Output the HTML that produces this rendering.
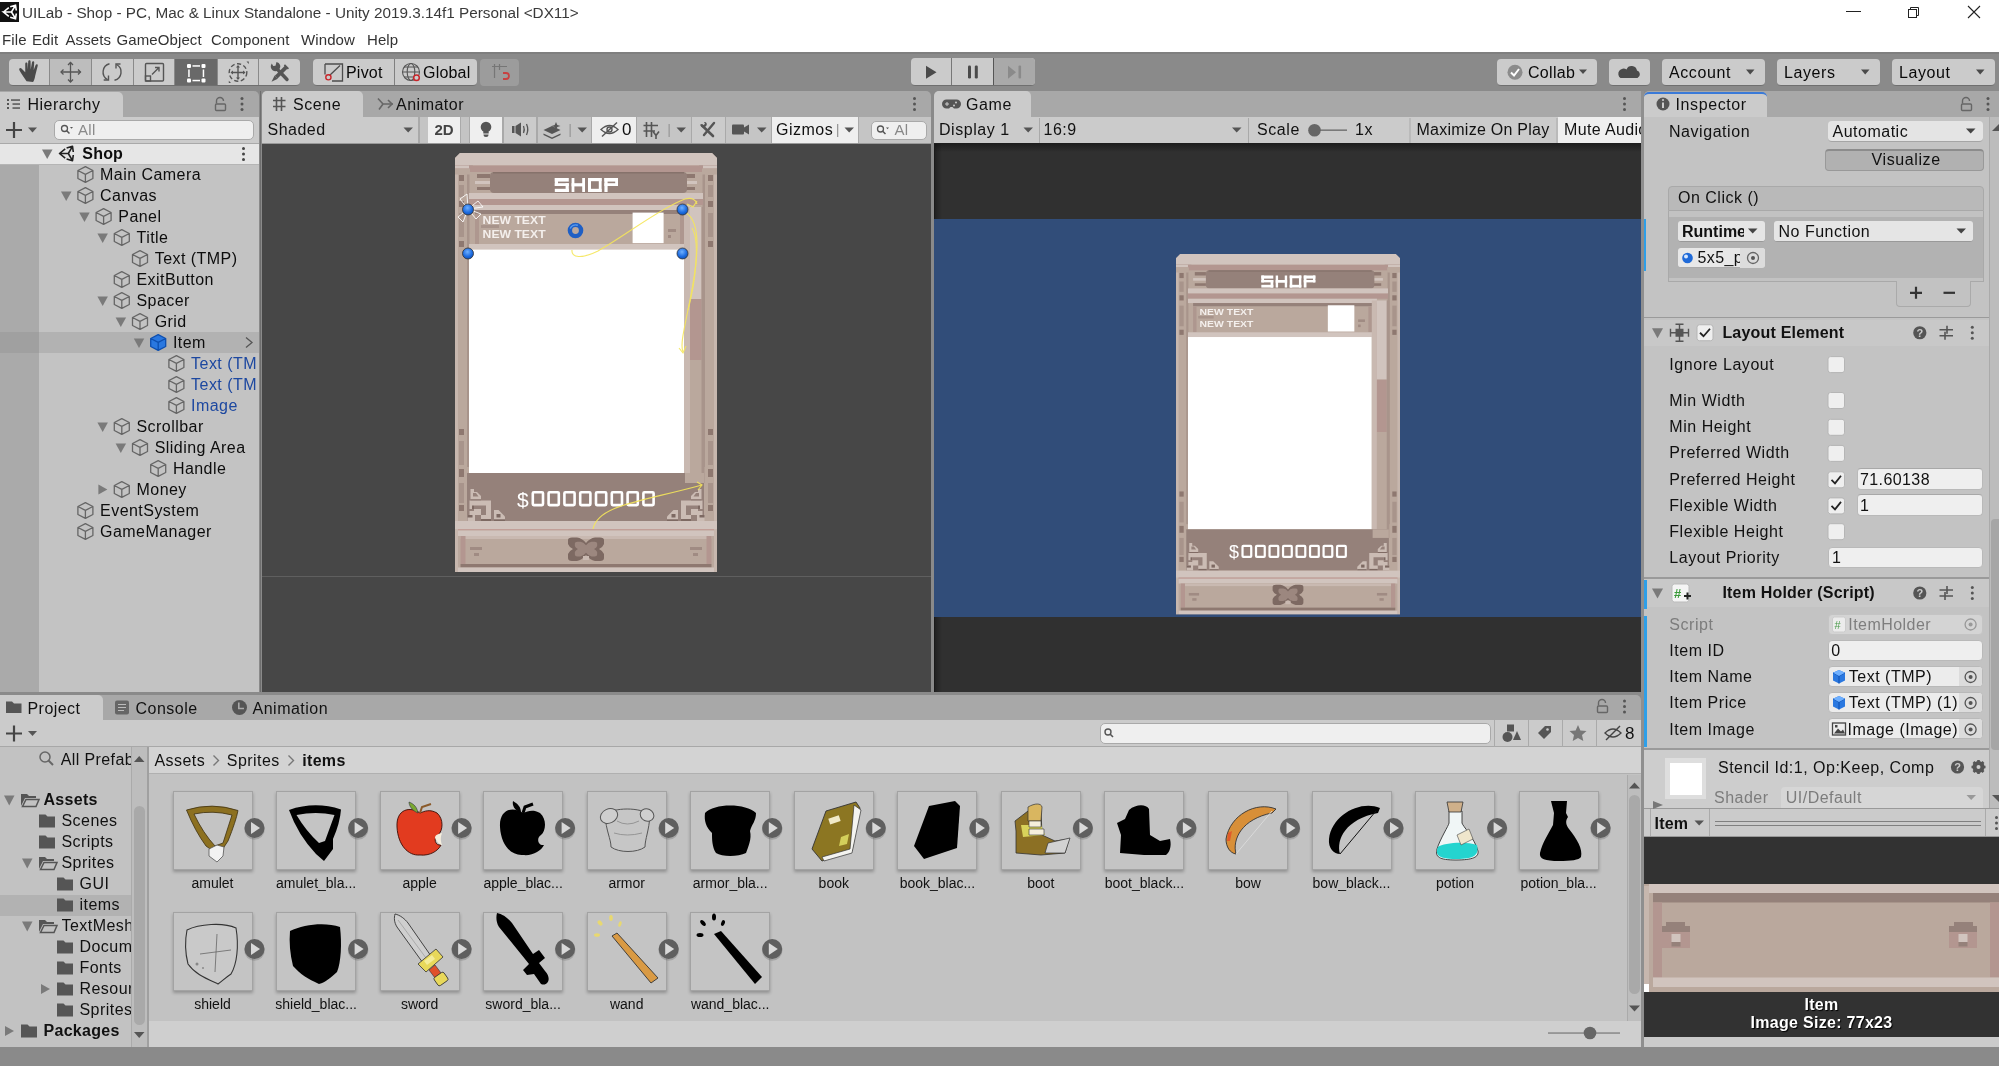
<!DOCTYPE html>
<html><head><meta charset="utf-8">
<style>
*{box-sizing:border-box;margin:0;padding:0}
html,body{width:1999px;height:1066px;overflow:hidden;background:#8a8a8a;font-family:"Liberation Sans",sans-serif;font-size:16px;color:#090909}
.a{position:absolute}
.t{position:absolute;white-space:nowrap;line-height:20px;letter-spacing:0.3px}
.b{font-weight:bold}
svg{position:absolute;overflow:visible}
.btn{position:absolute;background:#cbcbcb;border-bottom:1px solid #777;}
</style></head><body>
<div style="position:absolute;left:0;top:0;width:1999px;height:1066px;overflow:hidden;will-change:transform"><!-- title bar -->
<div class="a" style="left:0;top:0;width:1999px;height:52px;background:#fff"></div>
<!-- main toolbar -->
<div class="a" style="left:0;top:52px;width:1999px;height:39px;background:#8a8a8a;border-top:2px solid #7f7f7f"></div>
<!-- hierarchy -->
<div class="a" style="left:0;top:117px;width:259px;height:575px;background:#c3c3c3"></div>
<div class="a" style="left:0;top:91px;width:259px;height:26px;background:#a8a8a8;border-radius:0 5px 0 0"></div>
<div class="a" style="left:0;top:92px;width:123px;height:25px;background:#cbcbcb;border-radius:0 5px 0 0"></div>
<div class="a" style="left:0;top:117px;width:259px;height:27px;background:#cbcbcb;border-bottom:1px solid #a0a0a0"></div>
<div class="a" style="left:0;top:144px;width:39px;height:548px;background:#aaaaaa"></div>
<div class="a" style="left:260px;top:91px;width:1px;height:601px;background:#6e6e6e"></div>
<!-- scene -->
<div class="a" style="left:262px;top:117px;width:669px;height:575px;background:#474747"></div>
<div class="a" style="left:262px;top:91px;width:669px;height:26px;background:#a8a8a8;border-radius:5px 5px 0 0"></div>
<div class="a" style="left:262px;top:91px;width:101px;height:26px;background:#cbcbcb;border-radius:5px 5px 0 0"></div>
<div class="a" style="left:262px;top:117px;width:669px;height:27px;background:#cbcbcb;border-bottom:1px solid #999"></div>
<!-- game -->
<div class="a" style="left:934px;top:117px;width:707px;height:575px;background:#303030"></div>
<div class="a" style="left:934px;top:91px;width:707px;height:26px;background:#a8a8a8;border-radius:5px 0 0 0"></div>
<div class="a" style="left:934px;top:91px;width:97px;height:26px;background:#cbcbcb;border-radius:5px 5px 0 0"></div>
<div class="a" style="left:934px;top:117px;width:707px;height:27px;background:#cbcbcb;border-bottom:1px solid #1e1e1e"></div>
<div class="a" style="left:934px;top:219px;width:707px;height:398px;background:#314d79"></div>
<!-- inspector -->
<div class="a" style="left:1644px;top:117px;width:355px;height:930px;background:#c3c3c3"></div>
<div class="a" style="left:1644px;top:91px;width:355px;height:26px;background:#a8a8a8;border-radius:5px 0 0 0"></div>
<div class="a" style="left:1644px;top:92px;width:123px;height:25px;background:#cbcbcb;border-radius:5px 5px 0 0;border-top:2px solid #3a7ad8"></div>
<!-- project -->
<div class="a" style="left:0;top:720px;width:1641px;height:327px;background:#c2c2c2"></div>
<div class="a" style="left:0;top:695px;width:1641px;height:25px;background:#a8a8a8;border-radius:0 5px 0 0"></div>
<div class="a" style="left:0;top:695px;width:103px;height:25px;background:#cbcbcb;border-radius:0 5px 0 0"></div>
<div class="a" style="left:0;top:720px;width:1641px;height:27px;background:#cbcbcb;border-bottom:1px solid #a8a8a8"></div>
<div class="a" style="left:131px;top:747px;width:16px;height:300px;background:#b6b6b6;border-left:1px solid #aaa"></div>
<div class="a" style="left:147px;top:747px;width:2px;height:300px;background:#a0a0a0"></div>
<div class="a" style="left:149px;top:747px;width:1492px;height:27px;background:#d3d3d3;border-bottom:1px solid #b0b0b0"></div>
<div class="a" style="left:149px;top:1021px;width:1492px;height:26px;background:#cfcfcf"></div>
<div class="a" style="left:0;top:2px;width:19px;height:20px;background:#111"></div>
<svg style="left:0;top:0" width="1999" height="52">
 <path d="M3.5 12 L8.8 7.6 M10.2 6.8 L15.5 5.3 L16.3 10.5 M16.3 13.5 L15.5 18.7 L10.2 17.2 M8.8 16.4 L3.5 12 H11.5 L15.5 5.3 M11.5 12 L15.5 18.7" stroke="#fff" stroke-width="1.6" fill="none"/>
 <line x1="1846" y1="11.5" x2="1861" y2="11.5" stroke="#222" stroke-width="1"/>
 <rect x="1908.5" y="9.5" width="8" height="8" fill="none" stroke="#222"/>
 <path d="M1910.5 9.5 V7.5 H1918.5 V15.5 H1916.5" fill="none" stroke="#222"/>
 <path d="M1968 6 L1980 18 M1980 6 L1968 18" stroke="#222" stroke-width="1.1"/>
</svg>
<div class="t" style="left:22px;top:3px;font-size:15.3px;letter-spacing:0;color:#3a3a3a">UILab - Shop - PC, Mac &amp; Linux Standalone - Unity 2019.3.14f1 Personal &lt;DX11&gt;</div>
<div class="t" style="left:2px;top:30px;font-size:15px;letter-spacing:0.1px;color:#333">File</div>
<div class="t" style="left:32px;top:30px;font-size:15px;letter-spacing:0.1px;color:#333">Edit</div>
<div class="t" style="left:65.5px;top:30px;font-size:15px;letter-spacing:0.1px;color:#333">Assets</div>
<div class="t" style="left:116.5px;top:30px;font-size:15px;letter-spacing:0.1px;color:#333">GameObject</div>
<div class="t" style="left:211px;top:30px;font-size:15px;letter-spacing:0.1px;color:#333">Component</div>
<div class="t" style="left:301px;top:30px;font-size:15px;letter-spacing:0.1px;color:#333">Window</div>
<div class="t" style="left:367px;top:30px;font-size:15px;letter-spacing:0.1px;color:#333">Help</div>
<!-- tool group -->
<div class="a" style="left:9px;top:59px;width:291px;height:27px;background:#cbcbcb;border-radius:4px;border-bottom:1px solid #6f6f6f"></div>
<div class="a" style="left:50px;top:59px;width:41px;height:26px;background:#bdbdbd"></div>
<div class="a" style="left:175px;top:59px;width:42px;height:26px;background:#696969"></div>
<div class="a" style="left:49px;top:59px;width:1px;height:26px;background:#8a8a8a"></div>
<div class="a" style="left:91px;top:59px;width:1px;height:26px;background:#8a8a8a"></div>
<div class="a" style="left:133px;top:59px;width:1px;height:26px;background:#8a8a8a"></div>
<div class="a" style="left:174px;top:59px;width:1px;height:26px;background:#8a8a8a"></div>
<div class="a" style="left:217px;top:59px;width:1px;height:26px;background:#8a8a8a"></div>
<div class="a" style="left:258px;top:59px;width:1px;height:26px;background:#8a8a8a"></div>
<svg style="left:0;top:0" width="1999" height="91">
 <!-- hand -->
 <g transform="translate(28.5,71.5) scale(1.3) translate(-22,-69.5)"><path d="M20.5 77 C18.5 74 16 70.5 15 68.5 C14.4 67.2 15.8 66.3 16.8 67.3 L19.5 70 L19.5 63.5 C19.5 62.3 21.2 62.3 21.2 63.5 L21.4 68 L21.8 61.8 C21.9 60.6 23.6 60.6 23.6 61.8 L23.7 68 L24.7 62.3 C24.9 61.2 26.5 61.4 26.4 62.5 L26 68.3 L27.5 64.5 C27.9 63.5 29.4 63.9 29.1 65 L27.2 72.5 C26.8 75 26.2 76.5 25.5 77.5 Z" fill="#4a4a4a"/></g>
 <!-- move -->
 <g stroke="#555" stroke-width="1.3" fill="none"><path d="M70.5 62.5 V82 M61 72 H80.5"/><path d="M68 65 L70.5 62.5 L73 65 M68 79.5 L70.5 82 L73 79.5 M63.5 69.5 L61 72 L63.5 74.5 M78 69.5 L80.5 72 L78 74.5"/></g>
 <!-- rotate -->
 <g stroke="#555" stroke-width="1.4" fill="none"><path d="M109.5 63.8 A8.5 8.5 0 0 0 107.5 79.5"/><path d="M114.5 80.3 A8.5 8.5 0 0 0 116.5 64.5"/><path d="M103.7 80 H108.5 V75.5"/><path d="M120.5 64 H116 V68.5"/></g>
 <!-- scale -->
 <g stroke="#555" stroke-width="1.4" fill="none"><rect x="145.5" y="63.5" width="18" height="17.5" rx="1"/><rect x="145.5" y="76" width="5" height="5"/><path d="M152 74.5 L159 67.5 M155 67.5 H159 V71.5"/></g>
 <!-- rect -->
 <g fill="#fff"><rect x="187" y="64" width="4" height="4" rx="1"/><rect x="201.5" y="64" width="4" height="4" rx="1"/><rect x="187" y="78.5" width="4" height="4" rx="1"/><rect x="201.5" y="78.5" width="4" height="4" rx="1"/><rect x="192.5" y="65.2" width="7.5" height="1.5"/><rect x="192.5" y="79.8" width="7.5" height="1.5"/><rect x="188.2" y="69.5" width="1.5" height="7.5"/><rect x="202.7" y="69.5" width="1.5" height="7.5"/></g>
 <!-- transform -->
 <g stroke="#555" stroke-width="1.4" fill="none"><circle cx="238" cy="72.5" r="8.8" stroke-dasharray="4.2 2.5"/><path d="M238 66 V79 M231.5 72.5 H244.5"/></g>
 <g fill="#555"><path d="M236 67.5 L238 65 L240 67.5Z M236 77.5 L238 80 L240 77.5Z M233 70.5 L230.5 72.5 L233 74.5Z M243 70.5 L245.5 72.5 L243 74.5Z M246.5 61.5 L248.8 61.5 L248.8 64 Z M228.8 80.8 L228.8 83 L231 83Z"/></g>
 <!-- custom -->
 <path d="M278.5 70.5 L287 79.5" stroke="#555" stroke-width="3.4" stroke-linecap="round"/>
 <path d="M271.8 63.5 A4.6 4.6 0 0 0 279.3 69.5 A4.6 4.6 0 0 0 276.5 62 L275.5 65.8 L273.2 66 Z" fill="#555"/>
 <path d="M286.5 66.8 L276.2 77.2" stroke="#555" stroke-width="3.8"/>
 <path d="M285 64.3 L289 68.3 L287.8 69.5 L283.8 65.5Z" fill="#555"/>
 <path d="M274.6 75.6 L277.8 78.8 L271.5 81.8Z" fill="#555"/>
</svg>
<!-- pivot/global -->
<div class="a" style="left:313px;top:59px;width:164px;height:27px;background:#cbcbcb;border-radius:4px;border-bottom:1px solid #6f6f6f"></div>
<div class="a" style="left:394px;top:59px;width:1px;height:26px;background:#808080"></div>
<div class="a" style="left:480px;top:59px;width:39px;height:27px;background:#9c9c9c;border-radius:4px"></div>
<svg style="left:0;top:0" width="1999" height="91">
 <path d="M325 64 H342.5 V81 H332 M325 64 V74.5 M329.5 75.5 L340 65.5" stroke="#4d4d4d" stroke-width="1.3" fill="none"/>
 <circle cx="328.4" cy="77.3" r="2.6" stroke="#c8252a" stroke-width="1.4" fill="#cbcbcb"/>
 <g stroke="#555" stroke-width="1.1" fill="none"><circle cx="411" cy="72" r="8.5"/><ellipse cx="411" cy="72" rx="3.8" ry="8.5"/><path d="M402.5 72 H419.5 M404 67 H418 M404 77 H418"/></g>
 <circle cx="416.5" cy="77.8" r="2.8" stroke="#c8252a" stroke-width="1.5" fill="#cbcbcb"/>
 <g stroke="#767676" stroke-width="1.2" fill="none"><path d="M494.5 64 V78 M499.5 64 V70 M492 66.5 H507"/></g>
 <path d="M503 73 H506 A3 3 0 0 1 506 79 H503" stroke="#c84141" stroke-width="1.8" fill="none"/>
</svg>
<div class="t" style="left:346px;top:63px;font-size:16px;letter-spacing:0.2px">Pivot</div>
<div class="t" style="left:423px;top:63px;font-size:16px;letter-spacing:0.2px">Global</div>
<!-- play -->
<div class="a" style="left:911px;top:58px;width:124px;height:28px;background:#cbcbcb;border-radius:4px;border-bottom:1px solid #6f6f6f"></div>
<div class="a" style="left:994px;top:58px;width:41px;height:27px;background:#a9a9a9;border-radius:0 4px 4px 0"></div>
<div class="a" style="left:951px;top:58px;width:1px;height:27px;background:#777"></div>
<div class="a" style="left:993px;top:58px;width:1px;height:27px;background:#555"></div>
<svg style="left:0;top:0" width="1999" height="91">
 <path d="M926 65.7 L936.5 72.2 L926 78.8Z" fill="#4a4a4a"/>
 <rect x="968" y="65.5" width="3" height="13" rx="1.3" fill="#4a4a4a"/><rect x="974.8" y="65.5" width="3" height="13" rx="1.3" fill="#4a4a4a"/>
 <path d="M1008 65.7 L1016 72.2 L1008 78.8Z" fill="#8a8a8a"/><rect x="1018.5" y="65.5" width="2.6" height="13" rx="1" fill="#8a8a8a"/>
</svg>
<!-- right buttons -->
<div class="a" style="left:1497px;top:59px;width:100px;height:27px;background:#cbcbcb;border-radius:4px;border-bottom:1px solid #6f6f6f"></div>
<div class="a" style="left:1609px;top:59px;width:41px;height:27px;background:#cbcbcb;border-radius:4px;border-bottom:1px solid #6f6f6f"></div>
<div class="a" style="left:1662px;top:59px;width:103px;height:27px;background:#cbcbcb;border-radius:4px;border-bottom:1px solid #6f6f6f"></div>
<div class="a" style="left:1777px;top:59px;width:103px;height:27px;background:#cbcbcb;border-radius:4px;border-bottom:1px solid #6f6f6f"></div>
<div class="a" style="left:1892px;top:59px;width:103px;height:27px;background:#cbcbcb;border-radius:4px;border-bottom:1px solid #6f6f6f"></div>
<svg style="left:0;top:0" width="1999" height="91">
 <circle cx="1515" cy="72.3" r="7.5" fill="#8c8c8c"/>
 <path d="M1511 72.5 L1514 75.5 L1519 69" stroke="#fff" stroke-width="2" fill="none"/>
 <path d="M1579 69.5 H1587 L1583 74Z" fill="#4a4a4a"/>
 <path d="M1620.5 78 H1637.5 A4 4 0 0 0 1637 70.5 A5.5 5.5 0 0 0 1626.5 69.5 A4.3 4.3 0 0 0 1620.5 78Z" fill="#4a4a4a"/>
 <path d="M1746 69.5 H1754.5 L1750.2 74.5Z M1861 69.5 H1869.5 L1865.2 74.5Z M1976 69.5 H1984.5 L1980.2 74.5Z" fill="#4a4a4a"/>
</svg>
<div class="t" style="left:1528px;top:63px;font-size:16px;letter-spacing:0.3px">Collab</div>
<div class="t" style="left:1669px;top:63px;font-size:16px;letter-spacing:0.6px">Account</div>
<div class="t" style="left:1784px;top:63px;font-size:16px;letter-spacing:0.6px">Layers</div>
<div class="t" style="left:1899px;top:63px;font-size:16px;letter-spacing:0.6px">Layout</div>
<svg style="left:0;top:0" width="260" height="144">
 <g fill="#555"><rect x="7" y="99" width="2" height="2"/><rect x="7" y="103" width="2" height="2"/><rect x="7" y="107" width="2" height="2"/><rect x="11" y="99.3" width="9" height="1.5"/><rect x="12.5" y="103.3" width="7.5" height="1.5"/><rect x="12.5" y="107.3" width="7.5" height="1.5"/></g>
 <path d="M216.5 103.5 V101 A3.5 3.5 0 0 1 223.5 101" stroke="#666" stroke-width="1.4" fill="none"/><rect x="215.5" y="104" width="10" height="6.5" rx="1" fill="none" stroke="#666" stroke-width="1.4"/>
 <g fill="#555"><circle cx="242" cy="98.5" r="1.5"/><circle cx="242" cy="104" r="1.5"/><circle cx="242" cy="109.5" r="1.5"/></g>
 <path d="M6 130 H22 M14 122 V138" stroke="#444" stroke-width="2.2"/>
 <path d="M28 127.5 H37 L32.5 132.5Z" fill="#555"/>
</svg>
<div class="t" style="left:27.5px;top:95px;font-size:16px;letter-spacing:0.5px;color:#111">Hierarchy</div>
<div class="a" style="left:54px;top:120px;width:200px;height:19.5px;background:#efefef;border:1px solid #a9a9a9;border-radius:5px"></div>
<svg style="left:0;top:0" width="260" height="144">
 <circle cx="64.5" cy="128.5" r="3" stroke="#555" stroke-width="1.3" fill="none"/><path d="M66.5 130.5 L69.5 133.5" stroke="#555" stroke-width="1.5"/><path d="M70 127 H73 L71.5 128.8Z" fill="#555"/>
</svg>
<div class="t" style="left:78px;top:120px;font-size:15px;color:#8a8a8a;letter-spacing:0.3px">All</div>

<div class="a" style="left:0;top:143px;width:259px;height:22px;background:#e6e6e6;border-top:1px solid #a9a9a9;border-bottom:1px solid #b5b5b5"></div>
<div class="a" style="left:0;top:332px;width:39px;height:21px;background:#a0a0a0"></div>
<div class="a" style="left:39px;top:332px;width:220px;height:21px;background:#b2b2b2"></div>
<svg style="left:0;top:0" width="260" height="692">
<path d="M42.0 149.5 H52.5 L47.2 159.0Z" fill="#7a7a7a"/>
<path d="M59.5 153.5 L65.2 148.8 M66.6 148 L72.5 146.3 L73.3 152 M73.3 155 L72.5 160.7 L66.6 159 M65.2 158.2 L59.5 153.5 H68.3 L72.5 146.3 M68.3 153.5 L72.5 160.7" stroke="#222" stroke-width="1.6" fill="none" stroke-linejoin="round"/>
<g transform="translate(76.9,165.7)"><path d="M8.5 1 L16 4.8 L16 12.8 L8.5 16.6 L1 12.8 L1 4.8Z M1 4.8 L8.5 8.6 L16 4.8 M8.5 8.6 V16.6" fill="none" stroke="#666" stroke-width="1.3" stroke-linejoin="round"/></g>
<path d="M61.0 191.5 H71.5 L66.2 201.0Z" fill="#7a7a7a"/>
<g transform="translate(76.9,186.7)"><path d="M8.5 1 L16 4.8 L16 12.8 L8.5 16.6 L1 12.8 L1 4.8Z M1 4.8 L8.5 8.6 L16 4.8 M8.5 8.6 V16.6" fill="none" stroke="#666" stroke-width="1.3" stroke-linejoin="round"/></g>
<path d="M79.2 212.5 H89.7 L84.5 222.0Z" fill="#7a7a7a"/>
<g transform="translate(95.10000000000001,207.7)"><path d="M8.5 1 L16 4.8 L16 12.8 L8.5 16.6 L1 12.8 L1 4.8Z M1 4.8 L8.5 8.6 L16 4.8 M8.5 8.6 V16.6" fill="none" stroke="#666" stroke-width="1.3" stroke-linejoin="round"/></g>
<path d="M97.4 233.5 H107.9 L102.7 243.0Z" fill="#7a7a7a"/>
<g transform="translate(113.30000000000001,228.7)"><path d="M8.5 1 L16 4.8 L16 12.8 L8.5 16.6 L1 12.8 L1 4.8Z M1 4.8 L8.5 8.6 L16 4.8 M8.5 8.6 V16.6" fill="none" stroke="#666" stroke-width="1.3" stroke-linejoin="round"/></g>
<g transform="translate(131.5,249.7)"><path d="M8.5 1 L16 4.8 L16 12.8 L8.5 16.6 L1 12.8 L1 4.8Z M1 4.8 L8.5 8.6 L16 4.8 M8.5 8.6 V16.6" fill="none" stroke="#666" stroke-width="1.3" stroke-linejoin="round"/></g>
<g transform="translate(113.30000000000001,270.7)"><path d="M8.5 1 L16 4.8 L16 12.8 L8.5 16.6 L1 12.8 L1 4.8Z M1 4.8 L8.5 8.6 L16 4.8 M8.5 8.6 V16.6" fill="none" stroke="#666" stroke-width="1.3" stroke-linejoin="round"/></g>
<path d="M97.4 296.5 H107.9 L102.7 306.0Z" fill="#7a7a7a"/>
<g transform="translate(113.30000000000001,291.7)"><path d="M8.5 1 L16 4.8 L16 12.8 L8.5 16.6 L1 12.8 L1 4.8Z M1 4.8 L8.5 8.6 L16 4.8 M8.5 8.6 V16.6" fill="none" stroke="#666" stroke-width="1.3" stroke-linejoin="round"/></g>
<path d="M115.6 317.5 H126.1 L120.8 327.0Z" fill="#7a7a7a"/>
<g transform="translate(131.5,312.7)"><path d="M8.5 1 L16 4.8 L16 12.8 L8.5 16.6 L1 12.8 L1 4.8Z M1 4.8 L8.5 8.6 L16 4.8 M8.5 8.6 V16.6" fill="none" stroke="#666" stroke-width="1.3" stroke-linejoin="round"/></g>
<path d="M133.8 338.5 H144.3 L139.0 348.0Z" fill="#7a7a7a"/>
<g transform="translate(149.7,333.7)"><path d="M8.5 1 L16 4.8 L16 12.8 L8.5 16.6 L1 12.8 L1 4.8Z" fill="#2a78e0"/><path d="M8.5 1 L16 4.8 L16 12.8 L8.5 16.6 L1 12.8 L1 4.8Z M1 4.8 L8.5 8.6 L16 4.8 M8.5 8.6 V16.6" fill="none" stroke="#0d4fb0" stroke-width="1.3" stroke-linejoin="round"/></g>
<g transform="translate(167.9,354.7)"><path d="M8.5 1 L16 4.8 L16 12.8 L8.5 16.6 L1 12.8 L1 4.8Z M1 4.8 L8.5 8.6 L16 4.8 M8.5 8.6 V16.6" fill="none" stroke="#666" stroke-width="1.3" stroke-linejoin="round"/></g>
<g transform="translate(167.9,375.7)"><path d="M8.5 1 L16 4.8 L16 12.8 L8.5 16.6 L1 12.8 L1 4.8Z M1 4.8 L8.5 8.6 L16 4.8 M8.5 8.6 V16.6" fill="none" stroke="#666" stroke-width="1.3" stroke-linejoin="round"/></g>
<g transform="translate(167.9,396.7)"><path d="M8.5 1 L16 4.8 L16 12.8 L8.5 16.6 L1 12.8 L1 4.8Z M1 4.8 L8.5 8.6 L16 4.8 M8.5 8.6 V16.6" fill="none" stroke="#666" stroke-width="1.3" stroke-linejoin="round"/></g>
<path d="M97.4 422.5 H107.9 L102.7 432.0Z" fill="#7a7a7a"/>
<g transform="translate(113.30000000000001,417.7)"><path d="M8.5 1 L16 4.8 L16 12.8 L8.5 16.6 L1 12.8 L1 4.8Z M1 4.8 L8.5 8.6 L16 4.8 M8.5 8.6 V16.6" fill="none" stroke="#666" stroke-width="1.3" stroke-linejoin="round"/></g>
<path d="M115.6 443.5 H126.1 L120.8 453.0Z" fill="#7a7a7a"/>
<g transform="translate(131.5,438.7)"><path d="M8.5 1 L16 4.8 L16 12.8 L8.5 16.6 L1 12.8 L1 4.8Z M1 4.8 L8.5 8.6 L16 4.8 M8.5 8.6 V16.6" fill="none" stroke="#666" stroke-width="1.3" stroke-linejoin="round"/></g>
<g transform="translate(149.7,459.7)"><path d="M8.5 1 L16 4.8 L16 12.8 L8.5 16.6 L1 12.8 L1 4.8Z M1 4.8 L8.5 8.6 L16 4.8 M8.5 8.6 V16.6" fill="none" stroke="#666" stroke-width="1.3" stroke-linejoin="round"/></g>
<path d="M98.4 484.5 V494.5 L107.4 489.5Z" fill="#7a7a7a"/>
<g transform="translate(113.30000000000001,480.7)"><path d="M8.5 1 L16 4.8 L16 12.8 L8.5 16.6 L1 12.8 L1 4.8Z M1 4.8 L8.5 8.6 L16 4.8 M8.5 8.6 V16.6" fill="none" stroke="#666" stroke-width="1.3" stroke-linejoin="round"/></g>
<g transform="translate(76.9,501.7)"><path d="M8.5 1 L16 4.8 L16 12.8 L8.5 16.6 L1 12.8 L1 4.8Z M1 4.8 L8.5 8.6 L16 4.8 M8.5 8.6 V16.6" fill="none" stroke="#666" stroke-width="1.3" stroke-linejoin="round"/></g>
<g transform="translate(76.9,522.7)"><path d="M8.5 1 L16 4.8 L16 12.8 L8.5 16.6 L1 12.8 L1 4.8Z M1 4.8 L8.5 8.6 L16 4.8 M8.5 8.6 V16.6" fill="none" stroke="#666" stroke-width="1.3" stroke-linejoin="round"/></g>
<g fill="#444"><circle cx="243.5" cy="148.5" r="1.5"/><circle cx="243.5" cy="154" r="1.5"/><circle cx="243.5" cy="159.5" r="1.5"/></g>
<path d="M246 337.5 L252 342.5 L246 347.5" stroke="#555" stroke-width="1.3" fill="none"/>
</svg>
<div class="t b" style="left:82.3px;top:143.5px;color:#0d0d0d;letter-spacing:0.2px">Shop</div>
<div class="t" style="left:100.1px;top:164.5px;color:#0d0d0d;letter-spacing:0.45px">Main Camera</div>
<div class="t" style="left:100.1px;top:185.5px;color:#0d0d0d;letter-spacing:0.45px">Canvas</div>
<div class="t" style="left:118.3px;top:206.5px;color:#0d0d0d;letter-spacing:0.45px">Panel</div>
<div class="t" style="left:136.5px;top:227.5px;color:#0d0d0d;letter-spacing:0.45px">Title</div>
<div class="t" style="left:154.7px;top:248.5px;color:#0d0d0d;letter-spacing:0.45px">Text (TMP)</div>
<div class="t" style="left:136.5px;top:269.5px;color:#0d0d0d;letter-spacing:0.45px">ExitButton</div>
<div class="t" style="left:136.5px;top:290.5px;color:#0d0d0d;letter-spacing:0.45px">Spacer</div>
<div class="t" style="left:154.7px;top:311.5px;color:#0d0d0d;letter-spacing:0.45px">Grid</div>
<div class="t" style="left:172.9px;top:332.5px;color:#0d0d0d;letter-spacing:0.45px">Item</div>
<div class="t" style="left:191.1px;top:353.5px;color:#1d48a0;letter-spacing:0.45px">Text (TM</div>
<div class="t" style="left:191.1px;top:374.5px;color:#1d48a0;letter-spacing:0.45px">Text (TM</div>
<div class="t" style="left:191.1px;top:395.5px;color:#1d48a0;letter-spacing:0.45px">Image</div>
<div class="t" style="left:136.5px;top:416.5px;color:#0d0d0d;letter-spacing:0.45px">Scrollbar</div>
<div class="t" style="left:154.7px;top:437.5px;color:#0d0d0d;letter-spacing:0.45px">Sliding Area</div>
<div class="t" style="left:172.9px;top:458.5px;color:#0d0d0d;letter-spacing:0.45px">Handle</div>
<div class="t" style="left:136.5px;top:479.5px;color:#0d0d0d;letter-spacing:0.45px">Money</div>
<div class="t" style="left:100.1px;top:500.5px;color:#0d0d0d;letter-spacing:0.45px">EventSystem</div>
<div class="t" style="left:100.1px;top:521.5px;color:#0d0d0d;letter-spacing:0.45px">GameManager</div>
<svg width="0" height="0" style="position:absolute"><defs><symbol id="shop" viewBox="0 0 262 419" preserveAspectRatio="none"><path d="M5 0 H257 L262 5 V419 H0 V5Z" fill="#baa89d"/><rect x="0" y="12" width="3" height="407" fill="#c7b7ae"/><rect x="259" y="12" width="3" height="407" fill="#c7b7ae"/><rect x="12" y="14" width="2.5" height="300" fill="#a8948b"/><rect x="247.5" y="14" width="2.5" height="300" fill="#a8948b"/><rect x="4" y="22" width="5" height="6" fill="#8e7870"/><rect x="253" y="22" width="5" height="6" fill="#8e7870"/><rect x="4" y="32" width="5" height="12" fill="#a8948b"/><rect x="253" y="32" width="5" height="12" fill="#a8948b"/><rect x="4" y="48" width="5" height="6" fill="#8e7870"/><rect x="253" y="48" width="5" height="6" fill="#8e7870"/><rect x="4" y="60" width="5" height="24" fill="#a8948b"/><rect x="253" y="60" width="5" height="24" fill="#a8948b"/><rect x="4" y="88" width="5" height="6" fill="#8e7870"/><rect x="253" y="88" width="5" height="6" fill="#8e7870"/><rect x="4" y="276" width="5" height="6" fill="#8e7870"/><rect x="253" y="276" width="5" height="6" fill="#8e7870"/><rect x="4" y="288" width="5" height="24" fill="#a8948b"/><rect x="253" y="288" width="5" height="24" fill="#a8948b"/><rect x="4" y="316" width="5" height="8" fill="#8e7870"/><rect x="253" y="316" width="5" height="8" fill="#8e7870"/><rect x="4" y="330" width="5" height="20" fill="#a8948b"/><rect x="253" y="330" width="5" height="20" fill="#a8948b"/><rect x="4" y="352" width="5" height="6" fill="#8e7870"/><rect x="253" y="352" width="5" height="6" fill="#8e7870"/><path d="M5 0 H257 L262 5 V12.5 H0 V5Z" fill="#d1c4be"/><path d="M0 12.5 H18 L14 19 H0Z M262 12.5 H244 L248 19 H262Z" fill="#a8948b"/><rect x="0" y="12.5" width="262" height="6.5" fill="#b39690"/><rect x="0" y="12.5" width="14" height="3" fill="#d1c4be"/><rect x="248" y="12.5" width="14" height="3" fill="#d1c4be"/><rect x="0" y="15.5" width="15" height="6" fill="#baa89d"/><rect x="247" y="15.5" width="15" height="6" fill="#baa89d"/><rect x="22" y="21" width="13" height="4" fill="#8e7870"/><rect x="227" y="21" width="13" height="4" fill="#8e7870"/><rect x="20" y="28" width="15" height="3" fill="#d1c4be"/><rect x="227" y="28" width="15" height="3" fill="#d1c4be"/><rect x="22" y="34" width="13" height="3" fill="#8e7870"/><rect x="227" y="34" width="13" height="3" fill="#8e7870"/><rect x="35" y="19" width="197" height="21" rx="4" fill="#95817a"/><rect x="38" y="19" width="191" height="1.5" fill="#86726b"/><rect x="14" y="40" width="234" height="6" fill="#d1c4be"/><rect x="14" y="46" width="234" height="6" fill="#b39690"/><rect x="14" y="52" width="221" height="5" fill="#d1c4be"/><rect x="20" y="57" width="210" height="4" fill="#95817a"/><rect x="20" y="61" width="210" height="30" fill="#baa89d"/><rect x="20" y="61" width="4" height="30" fill="#ae978f"/><rect x="225" y="61" width="5" height="30" fill="#ae978f"/><rect x="177.6" y="59.6" width="31" height="30.5" fill="#ffffff"/><rect x="213" y="76" width="8" height="3" fill="#a08b83"/><rect x="213" y="82" width="3" height="3" fill="#a08b83"/><rect x="26" y="72" width="18" height="3" fill="#a8948b"/><rect x="14" y="91" width="216" height="5.5" fill="#d1c4be"/><rect x="14" y="96.5" width="215" height="223.5" fill="#ffffff"/><rect x="229" y="54" width="6" height="266" fill="#c9b9b1"/><rect x="235" y="54" width="11.5" height="92" fill="#d1c4be"/><rect x="235" y="146" width="11.5" height="61" fill="#b39690"/><rect x="235" y="207" width="11.5" height="119" fill="#baa89d"/><rect x="246.5" y="54" width="3" height="276" fill="#a8948b"/><rect x="12" y="320" width="237" height="48" fill="#95817a"/><rect x="230" y="320" width="19" height="10" fill="#baa89d"/><path d="M15.5 336 H19 V339 H22 L26 343 V346.5 H15.5Z" fill="#cbbcb4"/><path d="M18 340 H21 L23.5 343.5 H18Z" fill="#95817a"/><rect x="15.5" y="346.5" width="10.5" height="1.6" fill="#7d6962"/><path d="M14.5 347.5 H36 V368 H26 V362 H31 V352.5 H19 V356 H14.5Z" fill="#cbbcb4"/><path d="M19 356 H26 V362 H20 V368 H12.5 V362 H14.5 V358 H19Z" fill="#cbbcb4"/><rect x="17" y="352.5" width="2" height="3.5" fill="#7d6962"/><rect x="26" y="366" width="10" height="2" fill="#7d6962"/><rect x="12.5" y="362" width="5" height="2.5" fill="#7d6962"/><path d="M39 368 V357 H43.5 L50 363.5 V368Z" fill="#cbbcb4"/><rect x="41.5" y="361" width="4" height="3.5" fill="#7d6962"/><rect x="39" y="366.3" width="11" height="1.7" fill="#7d6962"/><g transform="translate(262,0) scale(-1,1)"><path d="M15.5 336 H19 V339 H22 L26 343 V346.5 H15.5Z" fill="#cbbcb4"/><path d="M18 340 H21 L23.5 343.5 H18Z" fill="#95817a"/><rect x="15.5" y="346.5" width="10.5" height="1.6" fill="#7d6962"/><path d="M14.5 347.5 H36 V368 H26 V362 H31 V352.5 H19 V356 H14.5Z" fill="#cbbcb4"/><path d="M19 356 H26 V362 H20 V368 H12.5 V362 H14.5 V358 H19Z" fill="#cbbcb4"/><rect x="17" y="352.5" width="2" height="3.5" fill="#7d6962"/><rect x="26" y="366" width="10" height="2" fill="#7d6962"/><rect x="12.5" y="362" width="5" height="2.5" fill="#7d6962"/><path d="M39 368 V357 H43.5 L50 363.5 V368Z" fill="#cbbcb4"/><rect x="41.5" y="361" width="4" height="3.5" fill="#7d6962"/><rect x="39" y="366.3" width="11" height="1.7" fill="#7d6962"/></g><text x="62" y="353.5" font-family="Liberation Sans" font-size="21" fill="#ffffff">$</text><rect x="77.8" y="339.3" width="10.2" height="12.8" rx="1" fill="none" stroke="#ffffff" stroke-width="2.6"/><rect x="93.6" y="339.3" width="10.2" height="12.8" rx="1" fill="none" stroke="#ffffff" stroke-width="2.6"/><rect x="109.39999999999999" y="339.3" width="10.2" height="12.8" rx="1" fill="none" stroke="#ffffff" stroke-width="2.6"/><rect x="125.2" y="339.3" width="10.2" height="12.8" rx="1" fill="none" stroke="#ffffff" stroke-width="2.6"/><rect x="141.0" y="339.3" width="10.2" height="12.8" rx="1" fill="none" stroke="#ffffff" stroke-width="2.6"/><rect x="156.8" y="339.3" width="10.2" height="12.8" rx="1" fill="none" stroke="#ffffff" stroke-width="2.6"/><rect x="172.60000000000002" y="339.3" width="10.2" height="12.8" rx="1" fill="none" stroke="#ffffff" stroke-width="2.6"/><rect x="188.40000000000003" y="339.3" width="10.2" height="12.8" rx="1" fill="none" stroke="#ffffff" stroke-width="2.6"/><rect x="0" y="368" width="262" height="8" fill="#d1c4be"/><rect x="3" y="376" width="256" height="1.5" fill="#c29f98"/><rect x="3" y="377.5" width="256" height="5.5" fill="#d1c4be"/><rect x="5.5" y="383" width="251" height="28" fill="#baa89d"/><rect x="5.5" y="383" width="251" height="3" fill="#c9b9b1"/><rect x="5.5" y="383" width="5" height="28" fill="#b39690"/><rect x="251.5" y="383" width="5" height="28" fill="#b39690"/><rect x="5.5" y="411" width="251" height="3.5" fill="#8e7870"/><rect x="3" y="414.5" width="256" height="4.5" fill="#d1c4be"/><rect x="15" y="394" width="12" height="3" fill="#a08b83"/><rect x="19" y="400" width="5" height="3" fill="#a08b83"/><rect x="235" y="394" width="12" height="3" fill="#a08b83"/><rect x="238" y="400" width="5" height="3" fill="#a08b83"/><path d="M113 387 Q113 384.5 117 384.5 L122 384.5 Q127 385 131 390 Q135 385 140 384.5 L145 384.5 Q149 384.5 149 387 L149 391 Q148 394 144 396 Q148 398 149 401 L149 405 Q149 408 145 408 L140 408 Q135 407 131 402 Q127 407 122 408 L117 408 Q113 408 113 405 L113 401 Q114 398 118 396 Q114 394 113 391Z" fill="#7d6962"/><g transform="translate(131,396) scale(0.62) translate(-131,-396)"><path d="M113 387 Q113 384.5 117 384.5 L122 384.5 Q127 385 131 390 Q135 385 140 384.5 L145 384.5 Q149 384.5 149 387 L149 391 Q148 394 144 396 Q148 398 149 401 L149 405 Q149 408 145 408 L140 408 Q135 407 131 402 Q127 407 122 408 L117 408 Q113 408 113 405 L113 401 Q114 398 118 396 Q114 394 113 391Z" fill="#9c877f"/></g><rect x="128" y="403" width="6" height="4" fill="#c9b9b1"/><text x="27.6" y="70.6" font-family="Liberation Sans" font-weight="bold" font-size="10" fill="#f4efec" textLength="63" lengthAdjust="spacingAndGlyphs">NEW TEXT</text><text x="27.6" y="85.2" font-family="Liberation Sans" font-weight="bold" font-size="10" fill="#f4efec" textLength="63" lengthAdjust="spacingAndGlyphs">NEW TEXT</text><rect x="99.8" y="25" width="14" height="3.6" fill="#fff"/><rect x="99.8" y="25" width="3.2" height="8" fill="#fff"/><rect x="99.8" y="30.2" width="14" height="2.8" fill="#fff"/><rect x="110.6" y="30.2" width="3.2" height="8.8" fill="#fff"/><rect x="99.8" y="35.8" width="14" height="3.2" fill="#fff"/><rect x="116.6" y="25" width="2.8" height="14" fill="#fff"/><rect x="127.2" y="25" width="2.8" height="14" fill="#fff"/><rect x="116.6" y="30.2" width="13.4" height="3.2" fill="#fff"/><rect x="133" y="25" width="13.6" height="3.2" fill="#fff"/><rect x="133" y="35.8" width="13.6" height="3.2" fill="#fff"/><rect x="133" y="25" width="3" height="14" fill="#fff"/><rect x="143.8" y="25" width="2.8" height="14" fill="#fff"/><rect x="149.4" y="25" width="3.2" height="14" fill="#fff"/><rect x="149.4" y="25" width="13.6" height="3.6" fill="#fff"/><rect x="160.2" y="25" width="2.8" height="8" fill="#fff"/><rect x="149.4" y="30.2" width="13.6" height="2.8" fill="#fff"/></symbol></defs></svg>

<svg style="left:0;top:0" width="1999" height="160">
 <g stroke="#555" stroke-width="1.6"><path d="M276.5 97 V111 M281.5 97 V111 M273 100.5 H285.5 M273 106.5 H285.5"/></g>
 <path d="M378 98.5 L383 104 L393 104 M383 104 L379 109.5" stroke="#666" stroke-width="1.6" fill="none"/><path d="M388 100 L392 104 L388 108" stroke="#666" stroke-width="1.6" fill="none"/>
 <g fill="#555"><circle cx="914.5" cy="98.5" r="1.5"/><circle cx="914.5" cy="104" r="1.5"/><circle cx="914.5" cy="109.5" r="1.5"/></g>
</svg>
<div class="t" style="left:293px;top:95px;letter-spacing:0.6px;color:#111">Scene</div>
<div class="t" style="left:396px;top:95px;letter-spacing:0.5px;color:#111">Animator</div>
<!-- scene toolbar buttons -->
<div class="a" style="left:418px;top:117px;width:2px;height:26px;background:#a9a9a9"></div>
<div class="a" style="left:420px;top:117px;width:8px;height:26px;background:#c4c4c4"></div>
<div class="a" style="left:428px;top:117px;width:32px;height:26px;background:#efefef"></div>
<div class="a" style="left:460px;top:117px;width:10px;height:26px;background:#c4c4c4;border-left:1px solid #aaa;border-right:1px solid #aaa"></div>
<div class="a" style="left:470px;top:117px;width:32px;height:26px;background:#efefef"></div>
<div class="a" style="left:502px;top:117px;width:2px;height:26px;background:#a9a9a9"></div>
<div class="a" style="left:536px;top:117px;width:2px;height:26px;background:#a9a9a9"></div>
<div class="a" style="left:538px;top:117px;width:54px;height:26px;background:#c5c5c5"></div>
<div class="a" style="left:591px;top:117px;width:1px;height:26px;background:#a9a9a9"></div>
<div class="a" style="left:592px;top:117px;width:44px;height:26px;background:#efefef"></div>
<div class="a" style="left:636px;top:117px;width:1px;height:26px;background:#a9a9a9"></div>
<div class="a" style="left:637px;top:117px;width:55px;height:26px;background:#c5c5c5"></div>
<div class="a" style="left:691px;top:117px;width:1px;height:26px;background:#a9a9a9"></div>
<div class="a" style="left:725px;top:117px;width:1px;height:26px;background:#a9a9a9"></div>
<div class="a" style="left:726px;top:117px;width:45px;height:26px;background:#c5c5c5"></div>
<div class="a" style="left:771px;top:117px;width:88px;height:26px;background:#efefef;border-left:1px solid #aaa;border-right:1px solid #aaa"></div>
<div class="a" style="left:859px;top:117px;width:72px;height:26px;background:#c5c5c5"></div>
<div class="a" style="left:871px;top:120.5px;width:56px;height:19px;background:#efefef;border:1px solid #a9a9a9;border-radius:5px"></div>
<div class="t" style="left:267.5px;top:120px;letter-spacing:0.5px;color:#111">Shaded</div>
<div class="t" style="left:434.5px;top:120px;font-size:15px;font-weight:bold;color:#444;letter-spacing:0">2D</div>
<div class="t" style="left:622px;top:120px;font-size:17px;color:#111;letter-spacing:0">0</div>
<div class="t" style="left:776px;top:120px;letter-spacing:0.5px;color:#111">Gizmos</div>
<div class="t" style="left:894.5px;top:120px;font-size:15px;color:#888;letter-spacing:0.3px">Al</div>
<svg style="left:0;top:0" width="1999" height="160">
 <path d="M403.5 127.5 H413 L408.2 132.5Z M577.5 127.5 H587 L582.2 132.5Z M676.5 127.5 H686 L681.2 132.5Z M757 127.5 H766.5 L761.7 132.5Z M844.5 127.5 H854 L849.2 132.5Z" fill="#555"/>
 <g fill="#555"><circle cx="486" cy="127" r="5.3"/><rect x="483.3" y="131.5" width="5.4" height="2"/><path d="M483.5 134.5 H488.5 A2.5 2.5 0 0 1 483.5 134.5Z"/></g>
 <g fill="#555"><rect x="512" y="126" width="2.5" height="7"/><path d="M515.5 126 L521 122.5 V136.5 L515.5 133Z"/></g>
 <path d="M523.5 126 Q525 129.5 523.5 133 M526.5 124 Q529 129.5 526.5 135" stroke="#555" stroke-width="1.3" fill="none"/>
 <g fill="#555"><path d="M543.5 130 L552 126 L560.5 130 L552 134Z"/><path d="M543.5 133.5 L552 137.5 L560.5 133.5 L560.5 135 L552 139 L543.5 135Z"/><path d="M556 122 L557.3 125 L560.5 126 L557.3 127 L556 130 L554.7 127 L551.5 126 L554.7 125Z"/></g>
 <rect x="569.5" y="124" width="1.3" height="13" fill="#999"/><rect x="668.5" y="124" width="1.3" height="13" fill="#999"/><rect x="837" y="124" width="1.3" height="13" fill="#999"/>
 <g stroke="#555" stroke-width="1.4" fill="none"><path d="M601 129.5 Q609.5 121.5 618 129.5 Q609.5 137.5 601 129.5Z"/><circle cx="609.5" cy="129.5" r="2.5"/><path d="M602 136.5 L617 122.5"/></g>
 <g stroke="#555" stroke-width="1.6" fill="none"><path d="M646.5 122 V137 M651.5 122 V137 M643.5 125.5 H658 M643.5 131 H655"/><path d="M653 131.5 L656 135.5 L659 131.5 M656 135.5 V139"/></g>
 <g stroke="#555" stroke-linecap="round" fill="none"><path d="M702 125.5 L713 136" stroke-width="2.6"/><path d="M714 123 L704 135" stroke-width="2.4"/></g>
 <path d="M700.5 124 C700 127 703 128.5 705 127 L706.5 125.5 C707.5 123.5 706 121.5 704 122 L705 123.8 L703.5 125.3Z" fill="#555"/>
 <g fill="#555"><rect x="732" y="124.5" width="12" height="10" rx="1"/><path d="M744 127.5 L749 124.5 V134.5 L744 131.5Z"/></g>
 <circle cx="880.5" cy="129" r="3" stroke="#555" stroke-width="1.3" fill="none"/><path d="M882.5 131 L885.5 134" stroke="#555" stroke-width="1.5"/><path d="M886 127.5 H889 L887.5 129.3Z" fill="#555"/>
</svg>
<div class="a" style="left:262px;top:575.5px;width:669px;height:1.5px;background:#5f5f5f"></div>
<svg style="left:455px;top:153px" width="262" height="419"><use href="#shop"/></svg>
<svg style="left:0;top:0" width="1999" height="692">
 <g fill="none" stroke="#f5e65a" stroke-width="1.15" opacity="0.9">
  <path d="M572 250 C571 258 582 259 598 251 C625 236 660 208 685 199 C692 197 696 200 697 204"/>
  <path d="M687 204 L693 207 L697 201"/>
  <path d="M686 213 C702 222 698 260 690 300 C684 330 680 345 683 352"/>
  <path d="M692 228 C700 240 696 280 688 310"/>
  <path d="M679 348 L683 353 L686 346"/>
  <path d="M593 529 C598 505 640 502 702 485"/>
  <path d="M697 482 L702 485 L698 490"/>
 </g>
 <g stroke="#fff" stroke-width="1" fill="none" opacity="0.85">
  <path d="M468 209 L460 199 L467 194 Z M468 209 L478 201 L483 207Z M468 209 L458 217 L463 222Z M468 209 L476 219 L481 214Z"/>
 </g>
 <defs><radialGradient id="bd" cx="0.45" cy="0.35" r="0.7"><stop offset="0" stop-color="#6fb0ff"/><stop offset="0.6" stop-color="#1e6ce0"/><stop offset="1" stop-color="#0c4cb0"/></radialGradient></defs>
 <g stroke="#333" stroke-width="0.8" fill="url(#bd)"><circle cx="468" cy="209.5" r="5.5"/><circle cx="682.5" cy="209.5" r="5.5"/><circle cx="468" cy="253.5" r="5.5"/><circle cx="682.5" cy="253.5" r="5.5"/></g>
 <circle cx="575.5" cy="230.5" r="5.6" stroke="#1f5fc4" stroke-width="4.4" fill="none"/><circle cx="575.5" cy="230.5" r="5.6" stroke="#5a9cf0" stroke-width="1.4" fill="none" stroke-dasharray="9 30" transform="rotate(200 575.5 230.5)"/>
</svg>
<div class="a" style="left:934px;top:144px;width:707px;height:8px;background:linear-gradient(#1f1f1f,#303030)"></div>
<svg style="left:0;top:0" width="1999" height="160">
 <path d="M946.5 99.5 H956.5 A4.5 4.5 0 0 1 956.5 108.5 L954 108.5 L952.5 107 H950.5 L949 108.5 H946.5 A4.5 4.5 0 0 1 946.5 99.5Z" fill="#555"/>
 <path d="M945 104 H949 M947 102 V106" stroke="#ccc" stroke-width="1"/>
 <circle cx="956" cy="102.5" r="1" fill="#ccc"/><circle cx="954" cy="105.5" r="1" fill="#ccc"/>
 <g fill="#555"><circle cx="1624.5" cy="98.5" r="1.5"/><circle cx="1624.5" cy="104" r="1.5"/><circle cx="1624.5" cy="109.5" r="1.5"/></g>
 <path d="M1023.5 127.5 H1033 L1028.2 132.5Z M1232 127.5 H1241.5 L1236.7 132.5Z" fill="#555"/>
 <rect x="1039" y="118" width="1" height="25" fill="#a9a9a9"/><rect x="1248" y="118" width="1" height="25" fill="#a9a9a9"/><rect x="1409.5" y="118" width="1" height="25" fill="#a9a9a9"/><rect x="1556.5" y="118" width="1" height="25" fill="#a9a9a9"/>
 <rect x="1314" y="129.5" width="33" height="1.3" fill="#666"/>
 <circle cx="1314.5" cy="130.2" r="6.3" fill="#666"/>
</svg>
<div class="a" style="left:1557.5px;top:117px;width:84px;height:26px;background:#efefef"></div>
<div class="t" style="left:966px;top:95px;letter-spacing:0.6px;color:#111">Game</div>
<div class="t" style="left:939px;top:120px;letter-spacing:0.55px;color:#111">Display 1</div>
<div class="t" style="left:1043.5px;top:120px;letter-spacing:0.5px;color:#111">16:9</div>
<div class="t" style="left:1257px;top:120px;letter-spacing:0.6px;color:#111">Scale</div>
<div class="t" style="left:1355px;top:120px;letter-spacing:0.5px;color:#111">1x</div>
<div class="t" style="left:1416.5px;top:120px;letter-spacing:0.25px;color:#111">Maximize On Play</div>
<div class="a" style="left:1557.5px;top:117px;width:84px;height:26px;overflow:hidden"><div class="t" style="left:6.5px;top:3px;letter-spacing:0.35px;color:#111">Mute Audio</div></div>
<svg style="left:1175.5px;top:253.5px" width="224" height="360.5"><use href="#shop"/></svg>
<div class="a" style="left:934px;top:144px;width:8px;height:75px;background:linear-gradient(90deg,rgba(0,0,0,0.35),rgba(0,0,0,0))"></div>
<div class="a" style="left:934px;top:617px;width:8px;height:75px;background:linear-gradient(90deg,rgba(0,0,0,0.35),rgba(0,0,0,0))"></div>
<div class="a" style="left:934px;top:144px;width:1px;height:75px;background:#1a1a1a"></div><div class="a" style="left:934px;top:617px;width:1px;height:75px;background:#1a1a1a"></div>
<div class="t" style="left:1675.5px;top:95px;letter-spacing:0.6px;color:#111;">Inspector</div>
<div class="a" style="left:1989px;top:117px;width:10px;height:691px;background:#bcbcbc;border-left:1px solid #aaa"></div>
<div class="a" style="left:1991px;top:519px;width:8px;height:231px;background:#a6a6a6;border-radius:4px 0 0 4px"></div>
<div class="t" style="left:1669px;top:121.69999999999999px;letter-spacing:0.55px;color:#111;">Navigation</div>
<div class="a" style="left:1827.5px;top:121px;width:155.5px;height:21px;background:#e4e4e4;border-radius:4px;border-bottom:1px solid #a5a5a5"></div>
<div class="t" style="left:1832.5px;top:121.69999999999999px;letter-spacing:0.5px;color:#111;">Automatic</div>
<div class="a" style="left:1825px;top:148.5px;width:158.5px;height:22.5px;background:#b1b1b1;border-radius:4px;border:1px solid #999;border-top:2px solid #8c8c8c"></div>
<div class="t" style="left:1871.5px;top:150px;letter-spacing:0.6px;color:#111;">Visualize</div>
<div class="a" style="left:1667.5px;top:185.5px;width:316.0px;height:25.0px;background:#b9b9b9;border-radius:4px 4px 0 0;border:1px solid #a9a9a9"></div>
<div class="t" style="left:1678px;top:188.3px;letter-spacing:0.5px;color:#111;">On Click ()</div>
<div class="a" style="left:1667.5px;top:210.5px;width:316.0px;height:71.5px;background:#c2c2c2;border:1px solid #a9a9a9;border-top:none"></div>
<div class="a" style="left:1668.5px;top:216.5px;width:314.0px;height:61.0px;background:#b2b2b2;"></div>
<div class="a" style="left:1678px;top:221px;width:87px;height:21px;background:#e5e5e5;border-radius:3px;border-bottom:1px solid #999"></div>
<div class="a" style="left:1678px;top:221px;width:66px;height:21px;overflow:hidden"><div class="t b" style="left:4px;top:1px;letter-spacing:0px;color:#111">Runtime</div></div>
<div class="a" style="left:1773.5px;top:221px;width:199.5px;height:21px;background:#e5e5e5;border-radius:3px;border-bottom:1px solid #999"></div>
<div class="t" style="left:1778.5px;top:221.5px;letter-spacing:0.5px;color:#111;">No Function</div>
<div class="a" style="left:1678px;top:247.5px;width:87px;height:20.5px;background:#e8e8e8;border-radius:3px;border-bottom:1px solid #aaa"></div>
<div class="a" style="left:1740px;top:247.5px;width:25px;height:20.5px;background:#dcdcdc;border-radius:0 3px 3px 0"></div>
<div class="a" style="left:1678px;top:247.5px;width:62px;height:21px;overflow:hidden"><div class="t" style="left:19.5px;top:0.5px;letter-spacing:0.4px;color:#111">5x5_p</div></div>
<div class="a" style="left:1895.5px;top:281px;width:75.0px;height:26px;background:#c2c2c2;border:1px solid #aaa;border-top:none;border-radius:0 0 4px 4px"></div>
<div class="a" style="left:1644px;top:317px;width:345px;height:1px;background:#9a9a9a;"></div>
<div class="a" style="left:1644px;top:219px;width:2px;height:51.5px;background:#2e9fe8;"></div>
<div class="a" style="left:1644px;top:320px;width:345px;height:25.5px;background:#c8c8c8;"></div>
<div class="t b" style="left:1722.4px;top:322.75px;letter-spacing:0.2px;color:#111;">Layout Element</div>
<div class="t" style="left:1669.3px;top:354.6px;letter-spacing:0.55px;color:#111;">Ignore Layout</div>
<div class="t" style="left:1669.3px;top:390.5px;letter-spacing:0.55px;color:#111;">Min Width</div>
<div class="t" style="left:1669.3px;top:417.3px;letter-spacing:0.55px;color:#111;">Min Height</div>
<div class="t" style="left:1669.3px;top:443.4px;letter-spacing:0.55px;color:#111;">Preferred Width</div>
<div class="t" style="left:1669.3px;top:469.8px;letter-spacing:0.55px;color:#111;">Preferred Height</div>
<div class="a" style="left:1856.5px;top:468.3px;width:126.5px;height:21.5px;background:#efefef;border-radius:4px;border:1px solid #b9b9b9;border-top-color:#a8a8a8"></div>
<div class="t" style="left:1860px;top:469.8px;letter-spacing:0.4px;color:#111;">71.60138</div>
<div class="t" style="left:1669.3px;top:495.9px;letter-spacing:0.55px;color:#111;">Flexible Width</div>
<div class="a" style="left:1856.5px;top:494.4px;width:126.5px;height:21.5px;background:#efefef;border-radius:4px;border:1px solid #b9b9b9;border-top-color:#a8a8a8"></div>
<div class="t" style="left:1860px;top:495.9px;letter-spacing:0.4px;color:#111;">1</div>
<div class="t" style="left:1669.3px;top:521.7px;letter-spacing:0.55px;color:#111;">Flexible Height</div>
<div class="t" style="left:1669.3px;top:547.8px;letter-spacing:0.55px;color:#111;">Layout Priority</div>
<div class="a" style="left:1828px;top:546.8px;width:155px;height:21.5px;background:#efefef;border-radius:4px;border:1px solid #b9b9b9"></div>
<div class="t" style="left:1832px;top:547.8px;letter-spacing:0.4px;color:#111;">1</div>
<div class="a" style="left:1644px;top:577px;width:345px;height:1.5px;background:#9a9a9a;"></div>
<div class="a" style="left:1644px;top:579px;width:345px;height:28px;background:#c8c8c8;"></div>
<div class="t b" style="left:1722.4px;top:583.0px;letter-spacing:0.2px;color:#111;">Item Holder (Script)</div>
<div class="a" style="left:1644px;top:580px;width:2.5px;height:29px;background:#2e9fe8;"></div>
<div class="a" style="left:1644px;top:615.5px;width:2.5px;height:131.5px;background:#2e9fe8;"></div>
<div class="t" style="left:1669.3px;top:614.5px;letter-spacing:0.55px;color:#7c7c7c;">Script</div>
<div class="a" style="left:1828px;top:613.5px;width:155px;height:21.0px;background:#d4d4d4;border-radius:4px;border:1px solid #c4c4c4"></div>
<div class="t" style="left:1848.3px;top:614.5px;letter-spacing:0.45px;color:#7e7e7e;">ItemHolder</div>
<div class="t" style="left:1669.3px;top:640.6px;letter-spacing:0.55px;color:#111;">Item ID</div>
<div class="a" style="left:1828px;top:639.5px;width:155px;height:21.5px;background:#efefef;border-radius:4px;border:1px solid #b9b9b9"></div>
<div class="t" style="left:1831.3px;top:640.6px;letter-spacing:0.4px;color:#111;">0</div>
<div class="t" style="left:1669.3px;top:667px;letter-spacing:0.55px;color:#111;">Item Name</div>
<div class="a" style="left:1828px;top:665.8px;width:155px;height:21.200000000000045px;background:#ececec;border-radius:4px;border:1px solid #b9b9b9"></div>
<div class="a" style="left:1959px;top:666.8px;width:23px;height:19.200000000000045px;background:#dcdcdc;border-radius:0 3px 3px 0"></div>
<div class="t" style="left:1848.8px;top:667px;letter-spacing:0.5px;color:#111;">Text (TMP)</div>
<div class="t" style="left:1669.3px;top:693px;letter-spacing:0.55px;color:#111;">Item Price</div>
<div class="a" style="left:1828px;top:691.8px;width:155px;height:21.200000000000045px;background:#ececec;border-radius:4px;border:1px solid #b9b9b9"></div>
<div class="a" style="left:1959px;top:692.8px;width:23px;height:19.200000000000045px;background:#dcdcdc;border-radius:0 3px 3px 0"></div>
<div class="t" style="left:1848.8px;top:693px;letter-spacing:0.5px;color:#111;">Text (TMP) (1)</div>
<div class="t" style="left:1669.3px;top:719.5px;letter-spacing:0.55px;color:#111;">Item Image</div>
<div class="a" style="left:1828px;top:718.3px;width:155px;height:21.200000000000045px;background:#ececec;border-radius:4px;border:1px solid #b9b9b9"></div>
<div class="a" style="left:1959px;top:719.3px;width:23px;height:19.200000000000045px;background:#dcdcdc;border-radius:0 3px 3px 0"></div>
<div class="t" style="left:1847.5px;top:719.5px;letter-spacing:0.5px;color:#111;">Image (Image)</div>
<div class="a" style="left:1644px;top:748px;width:345px;height:1.5px;background:#9a9a9a;"></div>
<div class="a" style="left:1644px;top:749.5px;width:345px;height:58.5px;background:#cdcdcd;"></div>
<div class="a" style="left:1665px;top:757.5px;width:41px;height:41.5px;background:#dedede;"></div>
<div class="a" style="left:1669.5px;top:762.5px;width:32.5px;height:32.5px;background:#ffffff;"></div>
<div class="t" style="left:1718px;top:758.4px;letter-spacing:0.5px;color:#111;"><span style="display:inline-block;width:225px;overflow:hidden;vertical-align:top">Stencil Id:1, Op:Keep, Comp</span></div>
<div class="t" style="left:1714px;top:788px;letter-spacing:0.5px;color:#7c7c7c;">Shader</div>
<div class="a" style="left:1780.5px;top:787px;width:202.5px;height:21px;background:#d6d6d6;border-radius:4px 4px 0 0"></div>
<div class="t" style="left:1785.7px;top:788px;letter-spacing:0.5px;color:#7c7c7c;">UI/Default</div>
<div class="a" style="left:1644px;top:808px;width:355px;height:28.5px;background:#cbcbcb;border-top:1px solid #999;border-bottom:1px solid #999"></div>
<div class="a" style="left:1650px;top:809px;width:1px;height:27px;background:#aaa;"></div>
<div class="t b" style="left:1654.5px;top:813.8px;letter-spacing:0.2px;color:#111;">Item</div>
<div class="a" style="left:1709px;top:809px;width:1px;height:27px;background:#aaa;"></div>
<div class="a" style="left:1714.5px;top:820.5px;width:266.5px;height:1.0px;background:#808080;"></div>
<div class="a" style="left:1714.5px;top:824.5px;width:266.5px;height:1.0px;background:#808080;"></div>
<div class="a" style="left:1984.5px;top:809px;width:1.0px;height:27px;background:#aaa;"></div>
<div class="a" style="left:1644px;top:836.5px;width:355px;height:200.5px;background:#323232;"></div>
<svg style="left:1644px;top:884px" width="355" height="108" viewBox="0 0 355 108" preserveAspectRatio="none"><rect x="0" y="0" width="355" height="108" fill="#baa89d"/><rect x="5" y="0" width="350" height="9" fill="#d1c4be"/><rect x="0" y="2" width="5" height="98" fill="#c7b7ae"/><rect x="9" y="9" width="346" height="9.5" fill="#95817a"/><rect x="9" y="18.5" width="9" height="75" fill="#b39690"/><rect x="346" y="18.5" width="9" height="75" fill="#b39690"/><rect x="18" y="42" width="28" height="6" fill="#95817a"/><rect x="22" y="38" width="19" height="4" fill="#95817a"/><rect x="18" y="48" width="28" height="16" fill="#b39690"/><rect x="27.5" y="50" width="9" height="8" fill="#d1c4be"/><rect x="27.5" y="58" width="9" height="4.5" fill="#95817a"/><rect x="305" y="42" width="28" height="6" fill="#95817a"/><rect x="310" y="38" width="19" height="4" fill="#95817a"/><rect x="305" y="48" width="28" height="16" fill="#b39690"/><rect x="314.5" y="50" width="9" height="8" fill="#d1c4be"/><rect x="314.5" y="58" width="9" height="4.5" fill="#95817a"/><rect x="9" y="93.5" width="346" height="9.5" fill="#d1c4be"/><rect x="0" y="103" width="355" height="5" fill="#baa89d"/><rect x="0" y="100" width="5" height="8" fill="#ffffff"/></svg>
<div class="t b" style="left:1644px;width:355px;text-align:center;top:994.6px;color:#fff;letter-spacing:0.3px;text-shadow:1px 1px 1px #000">Item</div>
<div class="t b" style="left:1644px;width:355px;text-align:center;top:1013px;color:#fff;letter-spacing:0.3px;text-shadow:1px 1px 1px #000">Image Size: 77x23</div>
<div class="a" style="left:1644px;top:1037px;width:355px;height:10px;background:#cbcbcb;"></div>
<div class="a" style="left:1641px;top:91px;width:3px;height:956px;background:#8f8f8f;"></div>
<svg style="left:0;top:0" width="1999" height="1066"><circle cx="1663" cy="104" r="6.5" fill="#555"/><rect x="1662" y="102.5" width="2" height="5.5" fill="#ccc"/><circle cx="1663" cy="100" r="1.1" fill="#ccc"/><path d="M1962.5 103.5 V101 A3.5 3.5 0 0 1 1969.5 101" stroke="#666" stroke-width="1.4" fill="none"/><rect x="1961.5" y="104" width="10" height="6.5" rx="1" fill="none" stroke="#666" stroke-width="1.4"/><g fill="#555"><circle cx="1988" cy="98.5" r="1.5"/><circle cx="1988" cy="104" r="1.5"/><circle cx="1988" cy="109.5" r="1.5"/></g><path d="M1992 131 L1999 124 V131Z" fill="#555"/><path d="M1992 795 H1999 V802Z" fill="#555"/><path d="M1966 128.5 H1975.5 L1970.7 133.5Z" fill="#444"/><path d="M1748 228.5 H1757.5 L1752.7 233.5Z" fill="#444"/><path d="M1956.5 228.5 H1966 L1961.2 233.5Z" fill="#444"/><circle cx="1687.5" cy="258" r="5.3" fill="#1f6ad8"/><circle cx="1686" cy="256.5" r="2" fill="#d8e8ff"/><circle cx="1753" cy="258" r="5.5" stroke="#666" stroke-width="1.3" fill="none"/><circle cx="1753" cy="258" r="2" fill="#555"/><path d="M1910 292.8 H1922 M1916 286.8 V298.8" stroke="#333" stroke-width="2.2"/><path d="M1943.5 292.8 H1955" stroke="#333" stroke-width="2.2"/><path d="M1652 328.25 H1663 L1657.5 338.25Z" fill="#7a7a7a"/><g stroke="#555" stroke-width="1.4" fill="none"><path d="M1679.5 323.75 V341.75 M1675.5 324.25 H1683.5 M1675.5 341.25 H1683.5 M1670.5 328.75 V336.75 M1688.5 328.75 V336.75 M1670.5 332.75 H1688.5"/></g><rect x="1675.5" y="328.75" width="8" height="8" fill="#555"/><rect x="1697" y="324.75" width="16" height="16" rx="2.5" fill="#efefef" stroke="#b5b5b5" stroke-width="1"/><path d="M1700 332.75 L1703.5 336.25 L1710 328.75" stroke="#222" stroke-width="1.8" fill="none"/><circle cx="1919.8" cy="332.75" r="6.6" fill="#555"/><text x="1919.8" y="337.05" text-anchor="middle" font-family="Liberation Sans" font-weight="bold" font-size="11" fill="#ccc">?</text><path d="M1939.5 329.75 H1953 M1939.5 335.75 H1953 M1947 325.75 V333.75 M1945 331.75 V339.75" stroke="#555" stroke-width="1.6"/><g fill="#555"><circle cx="1972.3" cy="327.25" r="1.5"/><circle cx="1972.3" cy="332.75" r="1.5"/><circle cx="1972.3" cy="338.25" r="1.5"/></g><rect x="1828" y="356.6" width="16.5" height="16" rx="2.5" fill="#efefef" stroke="#b5b5b5" stroke-width="1"/><rect x="1828" y="392.5" width="16.5" height="16" rx="2.5" fill="#efefef" stroke="#b5b5b5" stroke-width="1"/><rect x="1828" y="419.3" width="16.5" height="16" rx="2.5" fill="#efefef" stroke="#b5b5b5" stroke-width="1"/><rect x="1828" y="445.4" width="16.5" height="16" rx="2.5" fill="#efefef" stroke="#b5b5b5" stroke-width="1"/><rect x="1828" y="471.8" width="16.5" height="16" rx="2.5" fill="#efefef" stroke="#b5b5b5" stroke-width="1"/><path d="M1831.5 479.8 L1835 483.3 L1841 475.8" stroke="#222" stroke-width="1.8" fill="none"/><rect x="1828" y="497.9" width="16.5" height="16" rx="2.5" fill="#efefef" stroke="#b5b5b5" stroke-width="1"/><path d="M1831.5 505.9 L1835 509.4 L1841 501.9" stroke="#222" stroke-width="1.8" fill="none"/><rect x="1828" y="523.7" width="16.5" height="16" rx="2.5" fill="#efefef" stroke="#b5b5b5" stroke-width="1"/><path d="M1652 588.5 H1663 L1657.5 598.5Z" fill="#7a7a7a"/><rect x="1672" y="584.0" width="17" height="18" rx="2.5" fill="#f4f4f4" stroke="#bbb"/><text x="1674" y="597.5" font-family="Liberation Sans" font-weight="bold" font-size="13" fill="#3a9a3a">#</text><path d="M1684 596.0 H1691 M1687.5 592.5 V599.5" stroke="#222" stroke-width="2"/><circle cx="1919.8" cy="593.0" r="6.6" fill="#555"/><text x="1919.8" y="597.3" text-anchor="middle" font-family="Liberation Sans" font-weight="bold" font-size="11" fill="#ccc">?</text><path d="M1939.5 590.0 H1953 M1939.5 596.0 H1953 M1947 586.0 V594.0 M1945 592.0 V600.0" stroke="#555" stroke-width="1.6"/><g fill="#555"><circle cx="1972.3" cy="587.5" r="1.5"/><circle cx="1972.3" cy="593.0" r="1.5"/><circle cx="1972.3" cy="598.5" r="1.5"/></g><rect x="1832.5" y="617" width="13" height="15" rx="2" fill="#ececec" stroke="#ccc"/><text x="1834.5" y="629" font-family="Liberation Sans" font-size="11" fill="#4a9a4a">#</text><circle cx="1970.6" cy="624.5" r="5.5" stroke="#999" stroke-width="1.3" fill="none"/><circle cx="1970.6" cy="624.5" r="2" fill="#999"/><g transform="translate(1832.5,669.5)"><path d="M6.5 0.5 L12.5 3.3 V11 L6.5 14 L0.5 11 V3.3Z" fill="#2a78e0"/><path d="M0.5 3.3 L6.5 6.5 L12.5 3.3 M6.5 6.5 V14" stroke="#0d4fb0" stroke-width="1" fill="none"/><path d="M6.5 0.5 L12.5 3.3 L6.5 6.5 L0.5 3.3Z" fill="#6fb0ff"/></g><circle cx="1970.6" cy="677" r="5.5" stroke="#555" stroke-width="1.3" fill="none"/><circle cx="1970.6" cy="677" r="2" fill="#555"/><g transform="translate(1832.5,695.5)"><path d="M6.5 0.5 L12.5 3.3 V11 L6.5 14 L0.5 11 V3.3Z" fill="#2a78e0"/><path d="M0.5 3.3 L6.5 6.5 L12.5 3.3 M6.5 6.5 V14" stroke="#0d4fb0" stroke-width="1" fill="none"/><path d="M6.5 0.5 L12.5 3.3 L6.5 6.5 L0.5 3.3Z" fill="#6fb0ff"/></g><circle cx="1970.6" cy="703" r="5.5" stroke="#555" stroke-width="1.3" fill="none"/><circle cx="1970.6" cy="703" r="2" fill="#555"/><rect x="1832.5" y="723.0" width="13" height="12" fill="none" stroke="#444" stroke-width="1.3"/><path d="M1834 733.5 L1838 728.5 L1841 731.5 L1843 729.5 L1845 733.5Z" fill="#444"/><rect x="1835" y="725.0" width="2.5" height="2.5" fill="#444"/><circle cx="1970.6" cy="729.5" r="5.5" stroke="#555" stroke-width="1.3" fill="none"/><circle cx="1970.6" cy="729.5" r="2" fill="#555"/><circle cx="1957.5" cy="767" r="6.6" fill="#555"/><text x="1957.5" y="771.3" text-anchor="middle" font-family="Liberation Sans" font-weight="bold" font-size="11" fill="#ccc">?</text><g transform="translate(1978.5,767)"><circle r="4.5" fill="none" stroke="#555" stroke-width="3.2"/><g stroke="#555" stroke-width="2.6"><path d="M0 -7 V7 M-7 0 H7 M-5 -5 L5 5 M-5 5 L5 -5"/></g><circle r="2" fill="#cdcdcd"/></g><path d="M1966.5 795 H1976 L1971.2 800Z" fill="#999"/><path d="M1653 801 L1663 805 L1653 809Z" fill="#777"/><path d="M1694.5 820.5 H1704 L1699.2 825.5Z" fill="#555"/><g fill="#555"><circle cx="1996.5" cy="817.5" r="1.5"/><circle cx="1996.5" cy="823" r="1.5"/><circle cx="1996.5" cy="828.5" r="1.5"/></g></svg>
<div class="t" style="left:27.5px;top:698.5px;letter-spacing:0.45px;color:#111;">Project</div>
<div class="t" style="left:135.5px;top:698.5px;letter-spacing:0.5px;color:#111;">Console</div>
<div class="t" style="left:252.5px;top:698.5px;letter-spacing:0.5px;color:#111;">Animation</div>
<div class="a" style="left:1099.5px;top:723px;width:391.0px;height:20.5px;background:#efefef;border:1px solid #a9a9a9;border-radius:5px"></div>
<div class="a" style="left:1494px;top:720px;width:1px;height:27px;background:#aaa;"></div>
<div class="a" style="left:1528px;top:720px;width:1px;height:27px;background:#aaa;"></div>
<div class="a" style="left:1562px;top:720px;width:1px;height:27px;background:#aaa;"></div>
<div class="a" style="left:1596px;top:720px;width:1px;height:27px;background:#aaa;"></div>
<div class="t" style="left:1625px;top:723.5px;letter-spacing:0px;color:#111;font-size:17px;">8</div>
<div class="a" style="left:0px;top:747px;width:131px;height:300px;background:#c2c2c2;"></div>
<div class="a" style="left:0px;top:895px;width:131px;height:21px;background:#b2b2b2;"></div>
<div class="t" style="left:60.7px;top:749.5px;letter-spacing:0.4px;color:#111;width:70px;overflow:hidden">All Prefab</div>
<div class="t b" style="left:43.5px;top:790px;letter-spacing:0.3px;color:#111;width:87.5px;overflow:hidden">Assets</div>
<div class="t" style="left:61.5px;top:811px;letter-spacing:0.45px;color:#111;width:69.5px;overflow:hidden">Scenes</div>
<div class="t" style="left:61.5px;top:832px;letter-spacing:0.45px;color:#111;width:69.5px;overflow:hidden">Scripts</div>
<div class="t" style="left:61.5px;top:853px;letter-spacing:0.45px;color:#111;width:69.5px;overflow:hidden">Sprites</div>
<div class="t" style="left:79.5px;top:874px;letter-spacing:0.45px;color:#111;width:51.5px;overflow:hidden">GUI</div>
<div class="t" style="left:79.5px;top:895px;letter-spacing:0.45px;color:#111;width:51.5px;overflow:hidden">items</div>
<div class="t" style="left:61.5px;top:916px;letter-spacing:0.45px;color:#111;width:69.5px;overflow:hidden">TextMesh</div>
<div class="t" style="left:79.5px;top:937px;letter-spacing:0.45px;color:#111;width:51.5px;overflow:hidden">Docum</div>
<div class="t" style="left:79.5px;top:958px;letter-spacing:0.45px;color:#111;width:51.5px;overflow:hidden">Fonts</div>
<div class="t" style="left:79.5px;top:979px;letter-spacing:0.45px;color:#111;width:51.5px;overflow:hidden">Resour</div>
<div class="t" style="left:79.5px;top:1000px;letter-spacing:0.45px;color:#111;width:51.5px;overflow:hidden">Sprites</div>
<div class="t b" style="left:43.5px;top:1021px;letter-spacing:0.3px;color:#111;width:87.5px;overflow:hidden">Packages</div>
<div class="a" style="left:131px;top:747px;width:16px;height:300px;background:#bdbdbd;border-left:1px solid #aaa"></div>
<div class="a" style="left:133.5px;top:806px;width:11.5px;height:219px;background:#a9a9a9;border-radius:6px"></div>
<div class="t" style="left:154.5px;top:750.5px;letter-spacing:0.45px;color:#111;">Assets</div>
<div class="t" style="left:226.8px;top:750.5px;letter-spacing:0.45px;color:#111;">Sprites</div>
<div class="t b" style="left:302.3px;top:750.5px;letter-spacing:0.3px;color:#111;">items</div>
<div class="a" style="left:1627px;top:775px;width:14px;height:246px;background:#bdbdbd;border-left:1px solid #aaa"></div>
<div class="a" style="left:1629px;top:795px;width:11px;height:198.5px;background:#a9a9a9;border-radius:6px"></div>
<div class="a" style="left:1641px;top:695px;width:3px;height:352px;background:#8f8f8f;"></div>
<div class="a" style="left:172.5px;top:790.5px;width:80.0px;height:79.0px;background:#c4c4c4;border:1px solid #a3a3a3;box-shadow:0 2px 3px rgba(0,0,0,0.25)"></div>
<div class="a" style="left:276.1px;top:790.5px;width:80.0px;height:79.0px;background:#c4c4c4;border:1px solid #a3a3a3;box-shadow:0 2px 3px rgba(0,0,0,0.25)"></div>
<div class="a" style="left:379.6px;top:790.5px;width:80.0px;height:79.0px;background:#c4c4c4;border:1px solid #a3a3a3;box-shadow:0 2px 3px rgba(0,0,0,0.25)"></div>
<div class="a" style="left:483.1px;top:790.5px;width:80.0px;height:79.0px;background:#c4c4c4;border:1px solid #a3a3a3;box-shadow:0 2px 3px rgba(0,0,0,0.25)"></div>
<div class="a" style="left:586.7px;top:790.5px;width:80.0px;height:79.0px;background:#c4c4c4;border:1px solid #a3a3a3;box-shadow:0 2px 3px rgba(0,0,0,0.25)"></div>
<div class="a" style="left:690.2px;top:790.5px;width:80.0px;height:79.0px;background:#c4c4c4;border:1px solid #a3a3a3;box-shadow:0 2px 3px rgba(0,0,0,0.25)"></div>
<div class="a" style="left:793.8px;top:790.5px;width:80.0px;height:79.0px;background:#c4c4c4;border:1px solid #a3a3a3;box-shadow:0 2px 3px rgba(0,0,0,0.25)"></div>
<div class="a" style="left:897.4px;top:790.5px;width:80.0px;height:79.0px;background:#c4c4c4;border:1px solid #a3a3a3;box-shadow:0 2px 3px rgba(0,0,0,0.25)"></div>
<div class="a" style="left:1000.9px;top:790.5px;width:80.00000000000011px;height:79.0px;background:#c4c4c4;border:1px solid #a3a3a3;box-shadow:0 2px 3px rgba(0,0,0,0.25)"></div>
<div class="a" style="left:1104.4px;top:790.5px;width:80.0px;height:79.0px;background:#c4c4c4;border:1px solid #a3a3a3;box-shadow:0 2px 3px rgba(0,0,0,0.25)"></div>
<div class="a" style="left:1208.0px;top:790.5px;width:80.0px;height:79.0px;background:#c4c4c4;border:1px solid #a3a3a3;box-shadow:0 2px 3px rgba(0,0,0,0.25)"></div>
<div class="a" style="left:1311.5px;top:790.5px;width:80.0px;height:79.0px;background:#c4c4c4;border:1px solid #a3a3a3;box-shadow:0 2px 3px rgba(0,0,0,0.25)"></div>
<div class="a" style="left:1415.1px;top:790.5px;width:80.0px;height:79.0px;background:#c4c4c4;border:1px solid #a3a3a3;box-shadow:0 2px 3px rgba(0,0,0,0.25)"></div>
<div class="a" style="left:1518.6px;top:790.5px;width:80.0px;height:79.0px;background:#c4c4c4;border:1px solid #a3a3a3;box-shadow:0 2px 3px rgba(0,0,0,0.25)"></div>
<div class="a" style="left:172.5px;top:911.5px;width:80.0px;height:79.0px;background:#c4c4c4;border:1px solid #a3a3a3;box-shadow:0 2px 3px rgba(0,0,0,0.25)"></div>
<div class="a" style="left:276.1px;top:911.5px;width:80.0px;height:79.0px;background:#c4c4c4;border:1px solid #a3a3a3;box-shadow:0 2px 3px rgba(0,0,0,0.25)"></div>
<div class="a" style="left:379.6px;top:911.5px;width:80.0px;height:79.0px;background:#c4c4c4;border:1px solid #a3a3a3;box-shadow:0 2px 3px rgba(0,0,0,0.25)"></div>
<div class="a" style="left:483.1px;top:911.5px;width:80.0px;height:79.0px;background:#c4c4c4;border:1px solid #a3a3a3;box-shadow:0 2px 3px rgba(0,0,0,0.25)"></div>
<div class="a" style="left:586.7px;top:911.5px;width:80.0px;height:79.0px;background:#c4c4c4;border:1px solid #a3a3a3;box-shadow:0 2px 3px rgba(0,0,0,0.25)"></div>
<div class="a" style="left:690.2px;top:911.5px;width:80.0px;height:79.0px;background:#c4c4c4;border:1px solid #a3a3a3;box-shadow:0 2px 3px rgba(0,0,0,0.25)"></div>
<svg style="left:172.5px;top:790.5px" width="80" height="80"><path d="M13.5 19 Q39 11 65 19.5 Q63 30 55 50 L49 59 L40 60 L33 55 Q22 40 13.5 19Z M21 23 Q40 19 59 24 L50 52 L42 55 Q30 42 21 23Z" fill="#8c7020" fill-rule="evenodd" stroke="#3d3010" stroke-width="0.8"/><path d="M36 58 L44 54 L51 56 L50 65 L44 71 L36 65Z" fill="#f2f2f2" stroke="#555" stroke-width="0.8"/></svg>
<div class="t" style="left:152.5px;top:873.0px;letter-spacing:0px;color:#111;font-size:14px;width:120px;text-align:center">amulet</div>
<svg style="left:276.1px;top:790.5px" width="80" height="80"><path d="M13 19 Q39 10 65 18.5 Q64 32 57 48 L57 58 L48 70 L40 63 Q22 44 13 19Z M20.5 24 Q40 20 58.5 24 L49 50 L43 52 Q30 40 20.5 24Z" fill="#000" fill-rule="evenodd"/></svg>
<div class="t" style="left:256.1px;top:873.0px;letter-spacing:0px;color:#111;font-size:14px;width:120px;text-align:center">amulet_bla...</div>
<svg style="left:379.6px;top:790.5px" width="80" height="80"><path d="M40 22 C30 15 16 18 17 36 C18 54 28 65 40 64 C50 65 58 60 61 54 C55 55 53 47 58 44 C63 40 64 28 57 22 C50 18 45 20 40 22Z" fill="#e23b1f" stroke="#3a0c05" stroke-width="0.9"/><path d="M55 47 C58 52 60 54 62 54 C60 48 61 45 62 42 C58 43 55 44 55 47Z" fill="#f5eedd"/><path d="M40 22 L42 16 L51 13" stroke="#8a5a2a" stroke-width="2" fill="none"/><path d="M38 22 C31 19 29 14 29 11 C34 13 37 16 38 22Z" fill="#7aa830" stroke="#334" stroke-width="0.6"/></svg>
<div class="t" style="left:359.6px;top:873.0px;letter-spacing:0px;color:#111;font-size:14px;width:120px;text-align:center">apple</div>
<svg style="left:483.1px;top:790.5px" width="80" height="80"><path d="M40 22 C30 15 16 18 17 36 C18 54 28 65 40 64 C50 65 58 60 61 54 C55 55 53 47 58 44 C63 40 64 28 57 22 C50 18 45 20 40 22Z" fill="#000"/><path d="M40 22 L42 16 L50 13" stroke="#000" stroke-width="3" fill="none"/><path d="M38 22 C31 19 29 14 30 10 C35 13 38 16 38 22Z" fill="#000"/></svg>
<div class="t" style="left:463.1px;top:873.0px;letter-spacing:0px;color:#111;font-size:14px;width:120px;text-align:center">apple_blac...</div>
<svg style="left:586.7px;top:790.5px" width="80" height="80"><path d="M18 24 C26 16 54 16 63 24 C62 40 58 48 58 56 C50 62 32 62 24 56 C24 48 19 40 18 24Z" fill="#c6c6c6" stroke="#555" stroke-width="1"/><ellipse cx="22" cy="25" rx="9" ry="7" transform="rotate(-25 22 25)" fill="#cfcfcf" stroke="#555" stroke-width="1"/><ellipse cx="60" cy="24" rx="7" ry="6" transform="rotate(25 60 24)" fill="#cfcfcf" stroke="#555" stroke-width="1"/><path d="M30 30 Q40 36 52 30 M27 42 Q40 46 55 42" stroke="#888" stroke-width="0.8" fill="none"/></svg>
<div class="t" style="left:566.7px;top:873.0px;letter-spacing:0px;color:#111;font-size:14px;width:120px;text-align:center">armor</div>
<svg style="left:690.2px;top:790.5px" width="80" height="80"><path d="M15 22 C24 12 56 12 66 22 C66 30 62 33 60 40 C62 48 58 56 56 62 C48 66 32 66 26 62 C22 56 22 48 22 42 C16 36 14 30 15 22Z" fill="#000"/></svg>
<div class="t" style="left:670.2px;top:873.0px;letter-spacing:0px;color:#111;font-size:14px;width:120px;text-align:center">armor_bla...</div>
<svg style="left:793.8px;top:790.5px" width="80" height="80"><path d="M18 58 L32 20 L62 11 L66 17 L58 60 L28 70Z" fill="#8c7622" stroke="#333" stroke-width="0.9"/><path d="M60 14 L67 19 L58 62 L30 70 L28 66 L56 58Z" fill="#f4f4f0" stroke="#333" stroke-width="0.7"/><rect x="35" y="26" width="11" height="6" transform="rotate(-18 40 29)" fill="#f0e9c8"/><path d="M47 46 L55 43 L53 53 L45 55Z" fill="#d4cf5a"/></svg>
<div class="t" style="left:773.8px;top:873.0px;letter-spacing:0px;color:#111;font-size:14px;width:120px;text-align:center">book</div>
<svg style="left:897.4px;top:790.5px" width="80" height="80"><path d="M17 55 L32 15 L58 10 L63 15 L60 57 L27 68Z" fill="#000"/></svg>
<div class="t" style="left:877.4px;top:873.0px;letter-spacing:0px;color:#111;font-size:14px;width:120px;text-align:center">book_blac...</div>
<svg style="left:1000.9px;top:790.5px" width="80" height="80"><path d="M27 20 C32 15 40 16 40 20 L41 44 L54 50 L68 48 L64 62 L40 64 L15 62 L15 40 L14 30Z" fill="#8c7024" stroke="#333" stroke-width="0.8"/><path d="M27 16 C34 12 40 12 41 16 L40 30 L27 30Z" fill="#d9b660" stroke="#333" stroke-width="0.7"/><path d="M20 34 L40 34 L44 44 L22 46Z" fill="#d8d25a"/><path d="M28 30 H40 V36 H28Z M28 38 H43 V44 H28Z" fill="#f5efdc" stroke="#333" stroke-width="0.6"/><path d="M47 52 L69 47 L64 62 L44 62Z" fill="#d2d2d2" stroke="#333" stroke-width="0.7"/></svg>
<div class="t" style="left:980.9px;top:873.0px;letter-spacing:0px;color:#111;font-size:14px;width:120px;text-align:center">boot</div>
<svg style="left:1104.4px;top:790.5px" width="80" height="80"><path d="M25 19 C32 13 42 13 45 18 L46 44 L56 50 L66 48 C68 56 65 62 62 64 L40 64 L16 62 L17 44 L13 32 L21 28Z" fill="#000"/></svg>
<div class="t" style="left:1084.4px;top:873.0px;letter-spacing:0px;color:#111;font-size:14px;width:120px;text-align:center">boot_black...</div>
<svg style="left:1208.0px;top:790.5px" width="80" height="80"><path d="M68 18 C48 10 22 24 18 48 C18 56 22 62 28 63 C24 48 34 28 64 22Z" fill="#d88f38" stroke="#333" stroke-width="0.9"/><path d="M20 42 L24 40 L22 50 L19 50Z" fill="#e05a2a"/><path d="M64 20 L28 63" stroke="#ddd" stroke-width="0.9"/></svg>
<div class="t" style="left:1188.0px;top:873.0px;letter-spacing:0px;color:#111;font-size:14px;width:120px;text-align:center">bow</div>
<svg style="left:1311.5px;top:790.5px" width="80" height="80"><path d="M68 17 C48 9 20 24 17 48 C16 57 22 63 28 63 C24 48 34 28 66 22Z" fill="#000"/><path d="M64 20 L28 63" stroke="#111" stroke-width="1"/></svg>
<div class="t" style="left:1291.5px;top:873.0px;letter-spacing:0px;color:#111;font-size:14px;width:120px;text-align:center">bow_black...</div>
<svg style="left:1415.1px;top:790.5px" width="80" height="80"><path d="M34 20 H47 V32 C47 34 60 48 63 60 C64 66 58 69 41 69 C24 69 20 66 22 58 C25 48 34 34 34 32Z" fill="#f0f6f6" stroke="#333" stroke-width="0.9"/><path d="M23 56 C28 52 50 50 62 54 C64 64 60 68 41 68 C22 68 20 63 23 56Z" fill="#24d4cf"/><path d="M32 11 H48 L46 21 H34Z" fill="#cfb08a" stroke="#333" stroke-width="0.8"/><path d="M42 44 L54 38 L58 48 L46 54Z" fill="#efe6cc" stroke="#444" stroke-width="0.6"/></svg>
<div class="t" style="left:1395.1px;top:873.0px;letter-spacing:0px;color:#111;font-size:14px;width:120px;text-align:center">potion</div>
<svg style="left:1518.6px;top:790.5px" width="80" height="80"><path d="M32 10 H48 L47 22 L49 26 C46 30 47 34 50 38 C58 48 64 58 62 66 C60 69 52 70 40 70 C26 70 20 68 21 62 C23 52 30 42 34 34 L35 22Z" fill="#000"/></svg>
<div class="t" style="left:1498.6px;top:873.0px;letter-spacing:0px;color:#111;font-size:14px;width:120px;text-align:center">potion_bla...</div>
<svg style="left:172.5px;top:911.5px" width="80" height="80"><path d="M14 18 C26 12 50 10 63 16 C66 34 64 52 58 62 C52 66 48 70 45 72 C32 66 22 62 15 52 C12 40 12 28 14 18Z" fill="#c9c9c9" stroke="#333" stroke-width="1.1"/><path d="M44 22 L42 60 M27 42 L58 38" stroke="#666" stroke-width="0.8"/><circle cx="24" cy="52" r="1.5" fill="#888"/><circle cx="30" cy="56" r="1" fill="#888"/></svg>
<div class="t" style="left:152.5px;top:994.0px;letter-spacing:0px;color:#111;font-size:14px;width:120px;text-align:center">shield</div>
<svg style="left:276.1px;top:911.5px" width="80" height="80"><path d="M14 19 C28 12 50 10 64 15 C66 32 65 50 61 60 C54 66 50 70 43 72 C32 67 24 62 17 54 C14 42 13 30 14 19Z" fill="#000"/></svg>
<div class="t" style="left:256.1px;top:994.0px;letter-spacing:0px;color:#111;font-size:14px;width:120px;text-align:center">shield_blac...</div>
<svg style="left:379.6px;top:911.5px" width="80" height="80"><path d="M15 2 C20 3 25 7 28 11 L51 44 L43 51 L17 15 C14 10 14 6 15 2Z" fill="#cfcfcf" stroke="#333" stroke-width="0.9"/><path d="M18 8 L46 46" stroke="#999" stroke-width="0.7"/><path d="M38 52 L56 37 L63 45 L46 60Z" fill="#e8d85a" stroke="#333" stroke-width="0.8"/><path d="M44 49 L52 43 L55 47 L47 53Z" fill="#f4ec9a"/><path d="M49 58 L55 66 L61 61 L55 53Z" fill="#e0502a" stroke="#333" stroke-width="0.6"/><rect x="55" y="62" width="12" height="10" rx="2" transform="rotate(-35 61 67)" fill="#e8d85a" stroke="#333" stroke-width="0.8"/></svg>
<div class="t" style="left:359.6px;top:994.0px;letter-spacing:0px;color:#111;font-size:14px;width:120px;text-align:center">sword</div>
<svg style="left:483.1px;top:911.5px" width="80" height="80"><path d="M14 1 C20 2 26 7 29 11 L50 42 L56 38 L62 46 L56 51 L62 59 C69 66 65 75 58 72 L51 62 L44 63 L40 58 L46 52 L16 15 C13 10 13 5 14 1Z" fill="#000"/></svg>
<div class="t" style="left:463.1px;top:994.0px;letter-spacing:0px;color:#111;font-size:14px;width:120px;text-align:center">sword_bla...</div>
<svg style="left:586.7px;top:911.5px" width="80" height="80"><path d="M25 24 L30 21 L71 66 L64 71Z" fill="#d99a44" stroke="#333" stroke-width="0.9"/><ellipse cx="13" cy="11" rx="2" ry="3" transform="rotate(-40 13 11)" fill="#e8d870"/><ellipse cx="24" cy="6" rx="1.8" ry="3" fill="#e8d870"/><ellipse cx="33" cy="12" rx="1.5" ry="2.8" transform="rotate(20 33 12)" fill="#e8d870"/><ellipse cx="10" cy="23" rx="3" ry="1.8" fill="#e8d870"/></svg>
<div class="t" style="left:566.7px;top:994.0px;letter-spacing:0px;color:#111;font-size:14px;width:120px;text-align:center">wand</div>
<svg style="left:690.2px;top:911.5px" width="80" height="80"><path d="M24 22 L31 19 L72 65 L65 72Z" fill="#000"/><ellipse cx="13" cy="11" rx="2" ry="3.5" transform="rotate(-40 13 11)" fill="#000"/><ellipse cx="24" cy="5" rx="2" ry="3.5" fill="#000"/><ellipse cx="33" cy="11" rx="1.8" ry="3" transform="rotate(20 33 11)" fill="#000"/><ellipse cx="10" cy="23" rx="3.5" ry="2" fill="#000"/></svg>
<div class="t" style="left:670.2px;top:994.0px;letter-spacing:0px;color:#111;font-size:14px;width:120px;text-align:center">wand_blac...</div>
<svg style="left:0;top:0" width="1999" height="1066"><path d="M6 701.5 H12 L14 703.5 H21.5 V713 H6Z" fill="#555"/><rect x="115" y="700.5" width="14" height="14" rx="2" fill="#666"/><path d="M118 704.5 H126 M118 707.5 H126 M118 710.5 H124" stroke="#bbb" stroke-width="1.2"/><circle cx="239.5" cy="707.5" r="7.5" fill="#555"/><path d="M238.8 702.5 V708.5 H244" stroke="#aaa" stroke-width="1.6" fill="none"/><path d="M1598.5 705.5 V703 A3.5 3.5 0 0 1 1605.5 703" stroke="#666" stroke-width="1.4" fill="none"/><rect x="1597.5" y="706" width="10" height="6.5" rx="1" fill="none" stroke="#666" stroke-width="1.4"/><g fill="#555"><circle cx="1624.5" cy="701" r="1.5"/><circle cx="1624.5" cy="706.5" r="1.5"/><circle cx="1624.5" cy="712" r="1.5"/></g><path d="M6 733.5 H22 M14 725.5 V741.5" stroke="#444" stroke-width="2.2"/><path d="M28 731 H37 L32.5 736Z" fill="#555"/><circle cx="1108" cy="732" r="3" stroke="#555" stroke-width="1.4" fill="none"/><path d="M1110 734 L1113 737" stroke="#555" stroke-width="1.6"/><rect x="1507" y="724.5" width="7" height="7" fill="#555"/><circle cx="1507.5" cy="737" r="5" fill="#555"/><path d="M1513 740 L1517 731 L1521 740Z" fill="#555"/><path d="M1538 733 L1545 726 H1551 V732 L1544 739Z" fill="#555"/><circle cx="1547.5" cy="729.5" r="1.3" fill="#ccc"/><path d="M1578 725 L1580.4 730.5 L1586.5 731 L1582 735 L1583.3 741 L1578 738 L1572.7 741 L1574 735 L1569.5 731 L1575.6 730.5Z" fill="#777"/><g stroke="#444" stroke-width="1.4" fill="none"><path d="M1605 733 Q1613 725 1621 733 Q1613 741 1605 733Z"/><path d="M1606 740 L1620 726"/></g><circle cx="45" cy="757" r="5" stroke="#666" stroke-width="1.5" fill="none"/><path d="M48.5 760.5 L53 765" stroke="#666" stroke-width="2"/><path d="M4 795.5 H14.5 L9.25 805.5Z" fill="#7a7a7a"/><path d="M21 794 H27 L29 796 H36 V798 H25 L21 806Z" fill="#555"/><path d="M22.5 806.5 L26 799.5 H39 L36 806.5Z" fill="none" stroke="#555" stroke-width="1.5"/><path d="M39 814.5 H45.5 L47.5 816.5 H55 V827.5 H39Z" fill="#555"/><path d="M39 835.5 H45.5 L47.5 837.5 H55 V848.5 H39Z" fill="#555"/><path d="M22 858.5 H32.5 L27.25 868.5Z" fill="#7a7a7a"/><path d="M39 857 H45 L47 859 H54 V861 H43 L39 869Z" fill="#555"/><path d="M40.5 869.5 L44 862.5 H57 L54 869.5Z" fill="none" stroke="#555" stroke-width="1.5"/><path d="M57 877.5 H63.5 L65.5 879.5 H73 V890.5 H57Z" fill="#555"/><path d="M57 898.5 H63.5 L65.5 900.5 H73 V911.5 H57Z" fill="#555"/><path d="M22 921.5 H32.5 L27.25 931.5Z" fill="#7a7a7a"/><path d="M39 920 H45 L47 922 H54 V924 H43 L39 932Z" fill="#555"/><path d="M40.5 932.5 L44 925.5 H57 L54 932.5Z" fill="none" stroke="#555" stroke-width="1.5"/><path d="M57 940.5 H63.5 L65.5 942.5 H73 V953.5 H57Z" fill="#555"/><path d="M57 961.5 H63.5 L65.5 963.5 H73 V974.5 H57Z" fill="#555"/><path d="M41 984 V994 L50 989Z" fill="#7a7a7a"/><path d="M57 982.5 H63.5 L65.5 984.5 H73 V995.5 H57Z" fill="#555"/><path d="M57 1003.5 H63.5 L65.5 1005.5 H73 V1016.5 H57Z" fill="#555"/><path d="M5 1026 V1036 L14 1031Z" fill="#7a7a7a"/><path d="M21 1024.5 H27.5 L29.5 1026.5 H37 V1037.5 H21Z" fill="#555"/><path d="M134 762 L139.2 756 L144.5 762Z M134 1032 H144.5 L139.2 1038Z" fill="#555"/><path d="M213.5 755.5 L218.5 760.5 L213.5 765.5 M288.5 755.5 L293.5 760.5 L288.5 765.5" stroke="#777" stroke-width="1.4" fill="none"/><path d="M1629 788.5 L1634.5 782.5 L1640 788.5Z M1629 1005.5 H1640 L1634.5 1011.5Z" fill="#555"/><rect x="1548" y="1032.3" width="72" height="1.5" fill="#888"/><circle cx="1590" cy="1033" r="6.3" fill="#666"/><circle cx="254.5" cy="829.5" r="10.3" fill="rgba(0,0,0,0.15)"/><circle cx="254.5" cy="828.0" r="10" fill="#5f5f5f"/><path d="M251.0 822.0 L260.0 828.0 L251.0 834.0Z" fill="#d9d9d9"/><circle cx="358.1" cy="829.5" r="10.3" fill="rgba(0,0,0,0.15)"/><circle cx="358.1" cy="828.0" r="10" fill="#5f5f5f"/><path d="M354.6 822.0 L363.6 828.0 L354.6 834.0Z" fill="#d9d9d9"/><circle cx="461.6" cy="829.5" r="10.3" fill="rgba(0,0,0,0.15)"/><circle cx="461.6" cy="828.0" r="10" fill="#5f5f5f"/><path d="M458.1 822.0 L467.1 828.0 L458.1 834.0Z" fill="#d9d9d9"/><circle cx="565.1" cy="829.5" r="10.3" fill="rgba(0,0,0,0.15)"/><circle cx="565.1" cy="828.0" r="10" fill="#5f5f5f"/><path d="M561.6 822.0 L570.6 828.0 L561.6 834.0Z" fill="#d9d9d9"/><circle cx="668.7" cy="829.5" r="10.3" fill="rgba(0,0,0,0.15)"/><circle cx="668.7" cy="828.0" r="10" fill="#5f5f5f"/><path d="M665.2 822.0 L674.2 828.0 L665.2 834.0Z" fill="#d9d9d9"/><circle cx="772.2" cy="829.5" r="10.3" fill="rgba(0,0,0,0.15)"/><circle cx="772.2" cy="828.0" r="10" fill="#5f5f5f"/><path d="M768.8 822.0 L777.8 828.0 L768.8 834.0Z" fill="#d9d9d9"/><circle cx="875.8" cy="829.5" r="10.3" fill="rgba(0,0,0,0.15)"/><circle cx="875.8" cy="828.0" r="10" fill="#5f5f5f"/><path d="M872.3 822.0 L881.3 828.0 L872.3 834.0Z" fill="#d9d9d9"/><circle cx="979.4" cy="829.5" r="10.3" fill="rgba(0,0,0,0.15)"/><circle cx="979.4" cy="828.0" r="10" fill="#5f5f5f"/><path d="M975.9 822.0 L984.9 828.0 L975.9 834.0Z" fill="#d9d9d9"/><circle cx="1082.9" cy="829.5" r="10.3" fill="rgba(0,0,0,0.15)"/><circle cx="1082.9" cy="828.0" r="10" fill="#5f5f5f"/><path d="M1079.4 822.0 L1088.4 828.0 L1079.4 834.0Z" fill="#d9d9d9"/><circle cx="1186.4" cy="829.5" r="10.3" fill="rgba(0,0,0,0.15)"/><circle cx="1186.4" cy="828.0" r="10" fill="#5f5f5f"/><path d="M1182.9 822.0 L1191.9 828.0 L1182.9 834.0Z" fill="#d9d9d9"/><circle cx="1290.0" cy="829.5" r="10.3" fill="rgba(0,0,0,0.15)"/><circle cx="1290.0" cy="828.0" r="10" fill="#5f5f5f"/><path d="M1286.5 822.0 L1295.5 828.0 L1286.5 834.0Z" fill="#d9d9d9"/><circle cx="1393.5" cy="829.5" r="10.3" fill="rgba(0,0,0,0.15)"/><circle cx="1393.5" cy="828.0" r="10" fill="#5f5f5f"/><path d="M1390.0 822.0 L1399.0 828.0 L1390.0 834.0Z" fill="#d9d9d9"/><circle cx="1497.1" cy="829.5" r="10.3" fill="rgba(0,0,0,0.15)"/><circle cx="1497.1" cy="828.0" r="10" fill="#5f5f5f"/><path d="M1493.6 822.0 L1502.6 828.0 L1493.6 834.0Z" fill="#d9d9d9"/><circle cx="1600.6" cy="829.5" r="10.3" fill="rgba(0,0,0,0.15)"/><circle cx="1600.6" cy="828.0" r="10" fill="#5f5f5f"/><path d="M1597.1 822.0 L1606.1 828.0 L1597.1 834.0Z" fill="#d9d9d9"/><circle cx="254.5" cy="950.5" r="10.3" fill="rgba(0,0,0,0.15)"/><circle cx="254.5" cy="949.0" r="10" fill="#5f5f5f"/><path d="M251.0 943.0 L260.0 949.0 L251.0 955.0Z" fill="#d9d9d9"/><circle cx="358.1" cy="950.5" r="10.3" fill="rgba(0,0,0,0.15)"/><circle cx="358.1" cy="949.0" r="10" fill="#5f5f5f"/><path d="M354.6 943.0 L363.6 949.0 L354.6 955.0Z" fill="#d9d9d9"/><circle cx="461.6" cy="950.5" r="10.3" fill="rgba(0,0,0,0.15)"/><circle cx="461.6" cy="949.0" r="10" fill="#5f5f5f"/><path d="M458.1 943.0 L467.1 949.0 L458.1 955.0Z" fill="#d9d9d9"/><circle cx="565.1" cy="950.5" r="10.3" fill="rgba(0,0,0,0.15)"/><circle cx="565.1" cy="949.0" r="10" fill="#5f5f5f"/><path d="M561.6 943.0 L570.6 949.0 L561.6 955.0Z" fill="#d9d9d9"/><circle cx="668.7" cy="950.5" r="10.3" fill="rgba(0,0,0,0.15)"/><circle cx="668.7" cy="949.0" r="10" fill="#5f5f5f"/><path d="M665.2 943.0 L674.2 949.0 L665.2 955.0Z" fill="#d9d9d9"/><circle cx="772.2" cy="950.5" r="10.3" fill="rgba(0,0,0,0.15)"/><circle cx="772.2" cy="949.0" r="10" fill="#5f5f5f"/><path d="M768.8 943.0 L777.8 949.0 L768.8 955.0Z" fill="#d9d9d9"/></svg>
</div></body></html>
